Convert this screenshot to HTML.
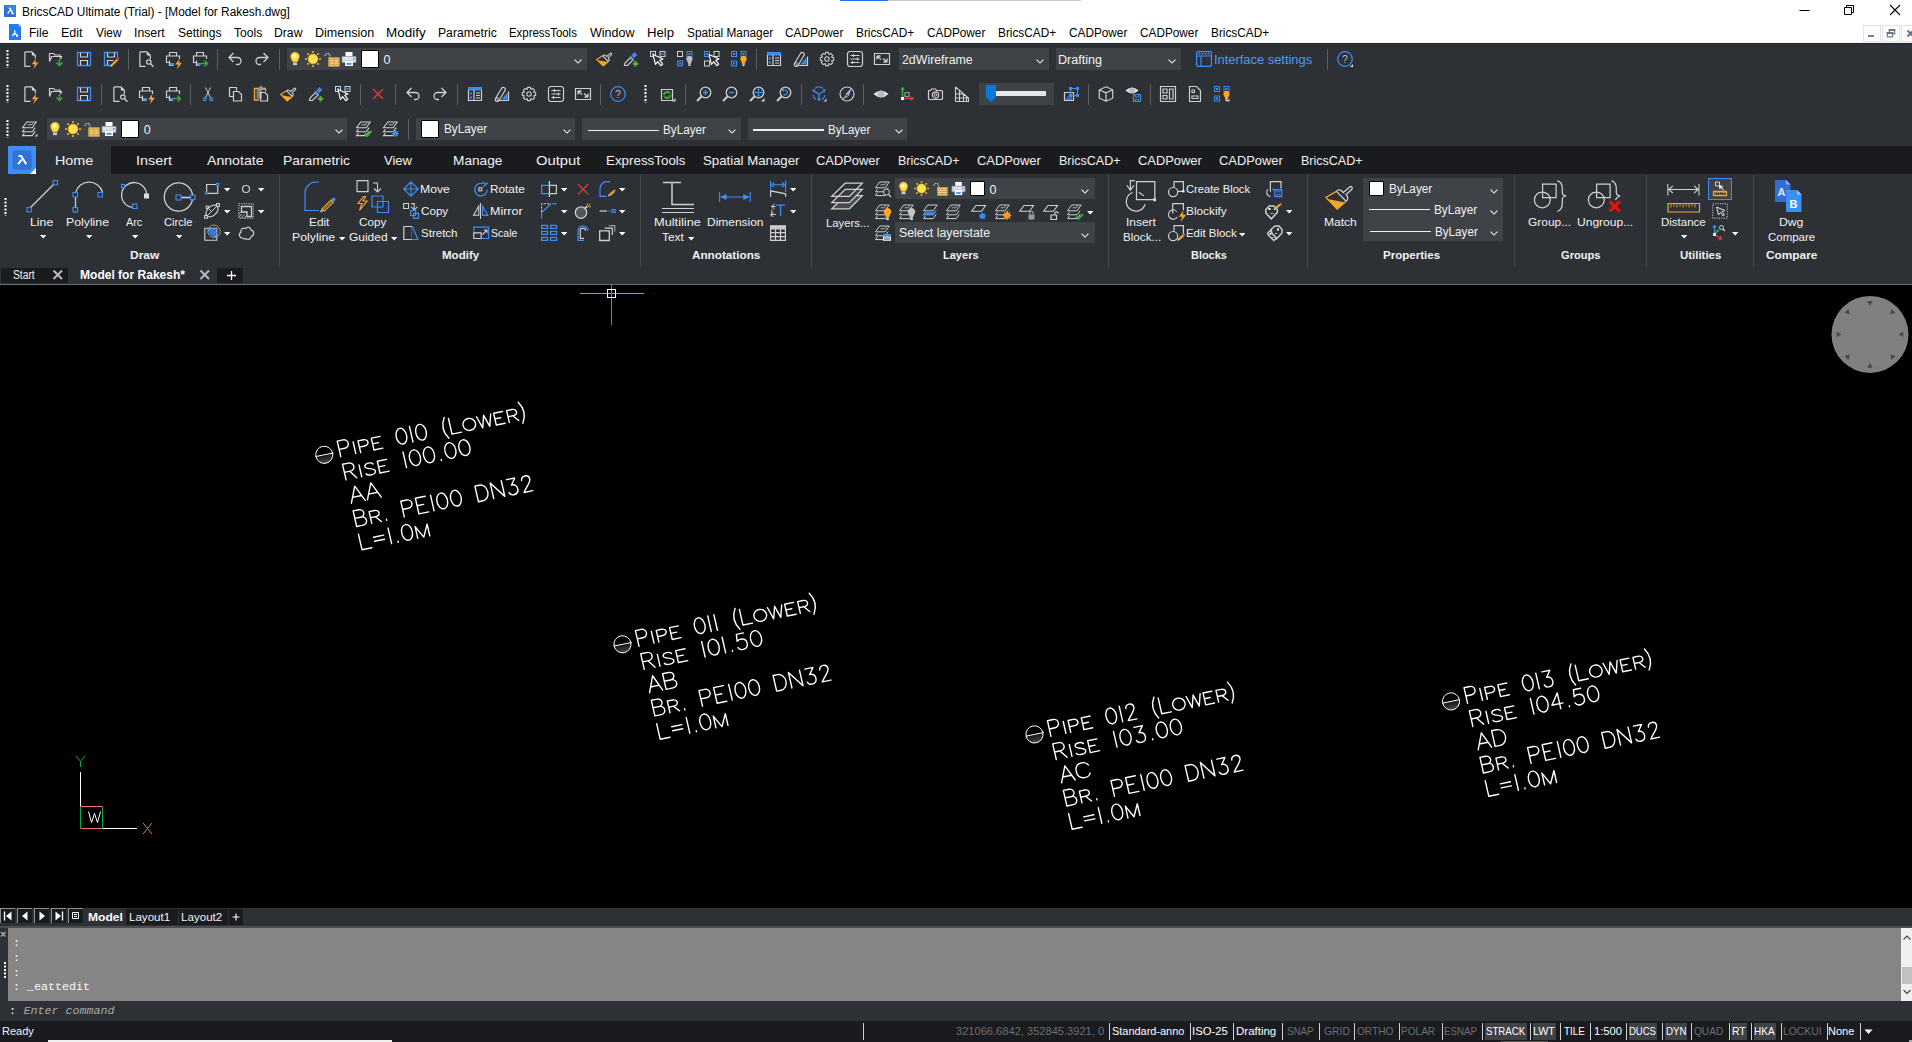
<!DOCTYPE html>
<html><head><meta charset="utf-8"><title>BricsCAD</title>
<style>
html,body{margin:0;padding:0;width:1912px;height:1042px;overflow:hidden;background:#2d3035}
body{position:relative;font-family:"Liberation Sans",sans-serif;font-size:12px}
div,span,svg{position:absolute;display:block}
span{white-space:pre}
svg{overflow:visible}
.cad path,.cad circle{vector-effect:non-scaling-stroke}
</style></head><body>
<div style="left:0px;top:0px;width:1912px;height:43px;background:#fff;"></div>
<div style="left:0px;top:42px;width:1912px;height:1px;background:#f2f2f2;"></div>
<div style="left:840px;top:0px;width:48px;height:1px;background:#1a73e8;"></div>
<div style="left:888px;top:0px;width:193px;height:1px;background:#c8c8c8;"></div>
<div style="left:0px;top:43px;width:1912px;height:103px;background:#2d3035;"></div>
<div style="left:0px;top:43px;width:1912px;height:1px;background:#26282c;"></div>
<div style="left:0px;top:146px;width:1912px;height:28px;background:#2d3035;"></div>
<div style="left:111px;top:146px;width:1801px;height:28px;background:#1a1b1e;"></div>
<div style="left:0px;top:174px;width:1912px;height:93px;background:#2d3035;"></div>
<div style="left:0px;top:267px;width:1912px;height:17px;background:#2d3035;"></div>
<div style="left:1px;top:268px;width:67px;height:15px;background:#1a1b1e;"></div>
<div style="left:217px;top:268px;width:26px;height:15px;background:#1a1b1e;"></div>
<div style="left:0px;top:284px;width:1912px;height:1px;background:#6a6c70;"></div>
<div style="left:0px;top:285px;width:1912px;height:623px;background:#000;"></div>
<div style="left:0px;top:908px;width:1912px;height:18px;background:#2d3035;"></div>
<div style="left:0px;top:926px;width:1912px;height:2px;background:#4a4d52;"></div>
<div style="left:0px;top:928px;width:1912px;height:73px;background:#2d3035;"></div>
<div style="left:8px;top:928px;width:1893px;height:73px;background:#858585;"></div>
<div style="left:1901px;top:928px;width:11px;height:73px;background:#f0f0f0;"></div>
<div style="left:0px;top:1001px;width:1912px;height:20px;background:#2d3035;"></div>
<div style="left:0px;top:1021px;width:1912px;height:21px;background:#1a1b1e;"></div>
<svg style="left:4px;top:5px" width="12" height="12" viewBox="0 0 12 12"><rect width="12" height="12" rx=".6" fill="#2f6dd4"/><path d="M.5 .5h11v11z" fill="#3f86ea"/><path d="M4.800 3.400h1.300l2.800 5.200h-1.600M6.300 5.200L3.600 8.700" stroke="#fff" stroke-width="1.300" fill="none"/></svg>
<span style="left:22.45px;top:3.9px;height:16px;line-height:16px;font-size:12px;color:#000;transform:scaleX(0.9910);transform-origin:0 0;">BricsCAD Ultimate (Trial) - [Model for Rakesh.dwg]</span>
<svg style="left:1790px;top:0" width="122" height="22" viewBox="0 0 122 22"><path d="M9.5 10.5h10" stroke="#000" stroke-width="1" fill="none"/><path d="M54.500 7.500h7v7h-7zM56.500 7.500v-2h7v7h-2" stroke="#000" stroke-width="1" fill="none"/><path d="M100 5l10 10M110 5l-10 10" stroke="#000" stroke-width="1.1" fill="none"/></svg>
<svg style="left:9px;top:24px" width="12" height="16" viewBox="0 0 12 16"><path d="M0 0h9.500L12 2.500V16H0z" fill="#2179f6"/><path d="M9.500 0v2.500H12z" fill="#7ab0fa"/><path d="M5.700 6.200v3L3.300 12.200M5.700 9.200l2.900 2.400l-1.400 1" stroke="#fff" stroke-width="1.300" fill="none" stroke-linejoin="round"/></svg>
<span style="left:29.44px;top:24.9px;height:16px;line-height:16px;font-size:12px;color:#000;transform:scaleX(1.0028);transform-origin:0 0;">File</span>
<span style="left:61.00px;top:24.9px;height:16px;line-height:16px;font-size:12px;color:#000;transform:scaleX(1.0428);transform-origin:0 0;">Edit</span>
<span style="left:96.00px;top:24.9px;height:16px;line-height:16px;font-size:12px;color:#000;transform:scaleX(0.9888);transform-origin:0 0;">View</span>
<span style="left:133.90px;top:24.9px;height:16px;line-height:16px;font-size:12px;color:#000;transform:scaleX(1.0220);transform-origin:0 0;">Insert</span>
<span style="left:177.52px;top:24.9px;height:16px;line-height:16px;font-size:12px;color:#000;transform:scaleX(1.0019);transform-origin:0 0;">Settings</span>
<span style="left:233.76px;top:24.9px;height:16px;line-height:16px;font-size:12px;color:#000;transform:scaleX(1.0067);transform-origin:0 0;">Tools</span>
<span style="left:274.02px;top:24.9px;height:16px;line-height:16px;font-size:12px;color:#000;transform:scaleX(1.0166);transform-origin:0 0;">Draw</span>
<span style="left:315.00px;top:24.9px;height:16px;line-height:16px;font-size:12px;color:#000;transform:scaleX(1.0459);transform-origin:0 0;">Dimension</span>
<span style="left:385.92px;top:24.9px;height:16px;line-height:16px;font-size:12px;color:#000;transform:scaleX(1.1226);transform-origin:0 0;">Modify</span>
<span style="left:438.03px;top:24.9px;height:16px;line-height:16px;font-size:12px;color:#000;transform:scaleX(1.0138);transform-origin:0 0;">Parametric</span>
<span style="left:509.09px;top:24.9px;height:16px;line-height:16px;font-size:12px;color:#000;transform:scaleX(0.9507);transform-origin:0 0;">ExpressTools</span>
<span style="left:590.00px;top:24.9px;height:16px;line-height:16px;font-size:12px;color:#000;transform:scaleX(1.0425);transform-origin:0 0;">Window</span>
<span style="left:646.94px;top:24.9px;height:16px;line-height:16px;font-size:12px;color:#000;transform:scaleX(1.0990);transform-origin:0 0;">Help</span>
<span style="left:686.53px;top:24.9px;height:16px;line-height:16px;font-size:12px;color:#000;transform:scaleX(0.9867);transform-origin:0 0;">Spatial Manager</span>
<span style="left:785.41px;top:24.9px;height:16px;line-height:16px;font-size:12px;color:#000;transform:scaleX(0.9829);transform-origin:0 0;">CADPower</span>
<span style="left:856.06px;top:24.9px;height:16px;line-height:16px;font-size:12px;color:#000;transform:scaleX(0.9839);transform-origin:0 0;">BricsCAD+</span>
<span style="left:927.41px;top:24.9px;height:16px;line-height:16px;font-size:12px;color:#000;transform:scaleX(0.9829);transform-origin:0 0;">CADPower</span>
<span style="left:998.06px;top:24.9px;height:16px;line-height:16px;font-size:12px;color:#000;transform:scaleX(0.9839);transform-origin:0 0;">BricsCAD+</span>
<span style="left:1069.41px;top:24.9px;height:16px;line-height:16px;font-size:12px;color:#000;transform:scaleX(0.9829);transform-origin:0 0;">CADPower</span>
<span style="left:1140.41px;top:24.9px;height:16px;line-height:16px;font-size:12px;color:#000;transform:scaleX(0.9829);transform-origin:0 0;">CADPower</span>
<span style="left:1211.06px;top:24.9px;height:16px;line-height:16px;font-size:12px;color:#000;transform:scaleX(0.9839);transform-origin:0 0;">BricsCAD+</span>
<div style="left:1863.3px;top:24.5px;width:17.4px;height:17.4px;background:#fdfdfd;border:1px solid #e2e2e2;box-sizing:border-box;"></div>
<div style="left:1882.4px;top:24.5px;width:17.3px;height:17.4px;background:#fdfdfd;border:1px solid #e2e2e2;box-sizing:border-box;"></div>
<div style="left:1901.2px;top:24.5px;width:17px;height:17.4px;background:#fdfdfd;border:1px solid #e2e2e2;box-sizing:border-box;"></div>
<svg style="left:1863px;top:24px" width="49" height="17" viewBox="0 0 49 17"><rect x="5" y="11.100" width="6" height="1.800" fill="#62748a"/><rect x="26.300" y="5.600" width="5.400" height="4.200" fill="none" stroke="#62748a" stroke-width="1.100"/><rect x="25.750" y="5" width="6.500" height="1.900" fill="#62748a"/><rect x="24.300" y="8.700" width="5.400" height="4.200" fill="#fdfdfd" stroke="#62748a" stroke-width="1.100"/><rect x="23.750" y="8.100" width="6.500" height="1.900" fill="#62748a"/><path d="M44.500 6.500l6 6M50.500 6.500l-6 6" stroke="#62748a" stroke-width="2"/></svg>
<div style="left:8px;top:146px;width:28px;height:28px;background:#3d8ef5;"></div>
<svg style="left:8px;top:146px" width="28" height="28" viewBox="0 0 28 28"><rect x="4.5" y="4.5" width="19" height="19" rx="2" fill="#3273d8"/><path d="M23.5 23.5v-14l-14 14z" fill="#2f6bc8" opacity=".5"/><path d="M10.5 10h2.6l5.2 8.2M13.8 13.6L10 18.2" stroke="#fff" stroke-width="2" fill="none"/><path d="M28 22v6h-6z" fill="#fff"/></svg>
<span style="left:55.25px;top:151.4px;height:20px;line-height:20px;font-size:13.5px;color:#f2f2f2;transform:scaleX(1.0625);transform-origin:0 0;">Home</span>
<span style="left:136.01px;top:151.4px;height:20px;line-height:20px;font-size:13.5px;color:#f2f2f2;transform:scaleX(1.0651);transform-origin:0 0;">Insert</span>
<span style="left:207.00px;top:151.4px;height:20px;line-height:20px;font-size:13.5px;color:#f2f2f2;transform:scaleX(1.0456);transform-origin:0 0;">Annotate</span>
<span style="left:282.89px;top:151.4px;height:20px;line-height:20px;font-size:13.5px;color:#f2f2f2;transform:scaleX(1.0248);transform-origin:0 0;">Parametric</span>
<span style="left:383.90px;top:151.4px;height:20px;line-height:20px;font-size:13.5px;color:#f2f2f2;transform:scaleX(0.9644);transform-origin:0 0;">View</span>
<span style="left:452.91px;top:151.4px;height:20px;line-height:20px;font-size:13.5px;color:#f2f2f2;transform:scaleX(1.0121);transform-origin:0 0;">Manage</span>
<span style="left:535.61px;top:151.4px;height:20px;line-height:20px;font-size:13.5px;color:#f2f2f2;transform:scaleX(1.0944);transform-origin:0 0;">Output</span>
<span style="left:605.93px;top:151.4px;height:20px;line-height:20px;font-size:13.5px;color:#f2f2f2;transform:scaleX(0.9897);transform-origin:0 0;">ExpressTools</span>
<span style="left:702.77px;top:151.4px;height:20px;line-height:20px;font-size:13.5px;color:#f2f2f2;transform:scaleX(0.9806);transform-origin:0 0;">Spatial Manager</span>
<span style="left:816.36px;top:151.4px;height:20px;line-height:20px;font-size:13.5px;color:#f2f2f2;transform:scaleX(0.9555);transform-origin:0 0;">CADPower</span>
<span style="left:898.00px;top:151.4px;height:20px;line-height:20px;font-size:13.5px;color:#f2f2f2;transform:scaleX(0.9271);transform-origin:0 0;">BricsCAD+</span>
<span style="left:977.36px;top:151.4px;height:20px;line-height:20px;font-size:13.5px;color:#f2f2f2;transform:scaleX(0.9555);transform-origin:0 0;">CADPower</span>
<span style="left:1059.00px;top:151.4px;height:20px;line-height:20px;font-size:13.5px;color:#f2f2f2;transform:scaleX(0.9271);transform-origin:0 0;">BricsCAD+</span>
<span style="left:1138.36px;top:151.4px;height:20px;line-height:20px;font-size:13.5px;color:#f2f2f2;transform:scaleX(0.9555);transform-origin:0 0;">CADPower</span>
<span style="left:1219.36px;top:151.4px;height:20px;line-height:20px;font-size:13.5px;color:#f2f2f2;transform:scaleX(0.9555);transform-origin:0 0;">CADPower</span>
<span style="left:1301.00px;top:151.4px;height:20px;line-height:20px;font-size:13.5px;color:#f2f2f2;transform:scaleX(0.9271);transform-origin:0 0;">BricsCAD+</span>
<span style="left:12.79px;top:266.7px;height:16px;line-height:16px;font-size:12px;color:#f2f2f2;transform:scaleX(0.8558);transform-origin:0 0;">Start</span>
<span style="left:79.78px;top:267px;height:16px;line-height:16px;font-size:12px;color:#fff;font-weight:bold;transform:scaleX(1.0030);transform-origin:0 0;">Model for Rakesh*</span>
<svg style="left:52px;top:269px" width="12" height="12" viewBox="0 0 12 12"><path d="M1.5 1.5l8.5 8.5M10 1.5l-8.5 8.5" stroke="#b8bcc6" stroke-width="1.9"/></svg>
<svg style="left:199px;top:269px" width="12" height="12" viewBox="0 0 12 12"><path d="M1.5 1.5l8.5 8.5M10 1.5l-8.5 8.5" stroke="#b8bcc6" stroke-width="1.9"/></svg>
<svg style="left:226px;top:270px" width="11" height="11" viewBox="0 0 11 11"><path d="M5.5 1v9M1 5.5h9" stroke="#fff" stroke-width="1.3"/></svg>
<svg style="left:0;top:285px" width="1912" height="623" viewBox="0 285 1912 623" fill="none" stroke="#fff" stroke-width="1.4" stroke-linecap="round" stroke-linejoin="round"><defs><linearGradient id="cg" x1="0" y1="0" x2="0" y2="1"><stop offset="0" stop-color="#111"/><stop offset="1" stop-color="#4a4a4a"/></linearGradient></defs><g class="cad"><g transform="translate(340.8 456.7) rotate(-11.50) skewX(1.4)"><path transform="translate(0.00 0) scale(16.385 16.000)" d="M0 0V-1H.36A.26 .26 0 0 1 .36 -.47H0"/><path transform="translate(15.32 0) scale(15.074 12.080)" d="M0 0V-1"/><path transform="translate(20.29 0) scale(15.074 12.080)" d="M0 0V-1H.36A.26 .26 0 0 1 .36 -.47H0"/><path transform="translate(33.86 0) scale(15.074 12.080)" d="M.6 0H0V-1H.6M0 -.52H.4"/><path transform="translate(58.45 0) scale(16.385 16.000)" d="M.32 -1A.32 .5 0 1 0 .32 0A.32 .5 0 1 0 .32 -1"/><path transform="translate(73.68 0) scale(16.385 16.000)" d="M0 0V-1"/><path transform="translate(78.44 0) scale(16.385 16.000)" d="M.32 -1A.32 .5 0 1 0 .32 0A.32 .5 0 1 0 .32 -1"/><path transform="translate(105.63 0) scale(16.385 16.000)" d="M.24 -1.12Q-.18 -.45 .24 .22"/><path transform="translate(113.50 0) scale(16.385 16.000)" d="M0 -1V0H.6"/><path transform="translate(126.15 0) scale(15.074 12.080)" d="M.42 -1A.42 .5 0 1 0 .42 0A.42 .5 0 1 0 .42 -1"/><path transform="translate(141.22 0) scale(15.074 12.080)" d="M0 -1L.24 0L.48 -1L.72 0L.96 -1"/><path transform="translate(158.71 0) scale(15.074 12.080)" d="M.6 0H0V-1H.6M0 -.52H.4"/><path transform="translate(171.97 0) scale(15.074 12.080)" d="M0 0V-1H.36A.26 .26 0 0 1 .36 -.48H0M.32 -.48L.64 0"/><path transform="translate(185.07 0) scale(16.385 16.000)" d="M0 -1.12Q.42 -.45 0 .22"/></g><g transform="translate(346.1 479.9) rotate(-11.50) skewX(1.4)"><path transform="translate(0.00 0) scale(17.043 16.000)" d="M0 0V-1H.36A.26 .26 0 0 1 .36 -.48H0M.32 -.48L.64 0"/><path transform="translate(15.93 0) scale(15.680 12.080)" d="M0 0V-1"/><path transform="translate(20.79 0) scale(15.680 12.080)" d="M.58 -.84C.5 -1.05 .06 -1.06 .03 -.78C0 -.5 .62 -.55 .62 -.24C.62 .08 .08 .06 0 -.17"/><path transform="translate(34.59 0) scale(15.680 12.080)" d="M.6 0H0V-1H.6M0 -.52H.4"/><path transform="translate(61.70 0) scale(17.043 16.000)" d="M0 0V-1"/><path transform="translate(66.65 0) scale(17.043 16.000)" d="M.32 -1A.32 .5 0 1 0 .32 0A.32 .5 0 1 0 .32 -1"/><path transform="translate(80.96 0) scale(17.043 16.000)" d="M.32 -1A.32 .5 0 1 0 .32 0A.32 .5 0 1 0 .32 -1"/><path transform="translate(97.32 0) scale(17.043 16.000)" d="M0 -.07V0"/><path transform="translate(102.78 0) scale(17.043 16.000)" d="M.32 -1A.32 .5 0 1 0 .32 0A.32 .5 0 1 0 .32 -1"/><path transform="translate(117.09 0) scale(17.043 16.000)" d="M.32 -1A.32 .5 0 1 0 .32 0A.32 .5 0 1 0 .32 -1"/></g><g transform="translate(351.4 503.2) rotate(-11.50) skewX(1.4)"><path transform="translate(0.00 0) scale(18.598 16.000)" d="M0 0L.38 -1L.76 0M.13 -.34H.63"/><path transform="translate(16.37 0) scale(18.598 16.000)" d="M0 0L.38 -1L.76 0M.13 -.34H.63"/></g><g transform="translate(356.7 526.5) rotate(-11.50) skewX(1.4)"><path transform="translate(0.00 0) scale(16.596 16.000)" d="M0 0V-1H.36A.24 .24 0 0 1 .36 -.52H0M.36 -.52H.4A.26 .26 0 0 1 .4 0H0"/><path transform="translate(15.41 0) scale(15.268 12.080)" d="M0 0V-1H.36A.26 .26 0 0 1 .36 -.48H0M.32 -.48L.64 0"/><path transform="translate(30.67 0) scale(16.596 16.000)" d="M0 -.07V0"/><path transform="translate(48.59 0) scale(16.596 16.000)" d="M0 0V-1H.36A.26 .26 0 0 1 .36 -.47H0"/><path transform="translate(63.53 0) scale(16.596 16.000)" d="M.6 0H0V-1H.6M0 -.52H.4"/><path transform="translate(78.96 0) scale(16.596 16.000)" d="M0 0V-1"/><path transform="translate(83.78 0) scale(16.596 16.000)" d="M.32 -1A.32 .5 0 1 0 .32 0A.32 .5 0 1 0 .32 -1"/><path transform="translate(97.72 0) scale(16.596 16.000)" d="M.32 -1A.32 .5 0 1 0 .32 0A.32 .5 0 1 0 .32 -1"/><path transform="translate(124.27 0) scale(16.596 16.000)" d="M0 0V-1H.28A.4 .5 0 0 1 .28 0H0"/><path transform="translate(139.87 0) scale(16.596 16.000)" d="M0 0V-1L.68 0V-1"/><path transform="translate(156.13 0) scale(16.596 16.000)" d="M.03 -1H.53L.24 -.6C.45 -.64 .56 -.48 .56 -.3C.56 .08 .08 .1 0 -.17"/><path transform="translate(170.74 0) scale(16.596 16.000)" d="M.02 -.76C.02 -1.08 .52 -1.08 .52 -.76C.52 -.55 .3 -.4 0 0H.54"/></g><g transform="translate(362.0 549.7) rotate(-11.50) skewX(1.4)"><path transform="translate(0.00 0) scale(16.696 16.000)" d="M0 -1V0H.6"/><path transform="translate(14.02 0) scale(16.696 16.000)" d="M0 -.62H.62M0 -.36H.62"/><path transform="translate(30.22 0) scale(16.696 16.000)" d="M0 0V-1"/><path transform="translate(37.06 0) scale(16.696 16.000)" d="M0 -.07V0"/><path transform="translate(42.41 0) scale(16.696 16.000)" d="M.32 -1A.32 .5 0 1 0 .32 0A.32 .5 0 1 0 .32 -1"/><path transform="translate(56.91 0) scale(15.360 12.080)" d="M0 0V-1L.4 0L.8 -1V0"/></g><g transform="translate(324.3 454.8) rotate(-11.5)"><path d="M-8.6 0A8.6 8.6 0 0 0 8.6 0z" fill="url(#cg)" stroke="none"/><circle r="8.6" stroke-width="1"/><path d="M-8.6 0H8.6" stroke-width="1"/></g><g transform="translate(639.0 646.2) rotate(-11.50) skewX(1.4)"><path transform="translate(0.00 0) scale(16.406 16.000)" d="M0 0V-1H.36A.26 .26 0 0 1 .36 -.47H0"/><path transform="translate(15.34 0) scale(15.094 12.080)" d="M0 0V-1"/><path transform="translate(20.32 0) scale(15.094 12.080)" d="M0 0V-1H.36A.26 .26 0 0 1 .36 -.47H0"/><path transform="translate(33.90 0) scale(15.094 12.080)" d="M.6 0H0V-1H.6M0 -.52H.4"/><path transform="translate(58.52 0) scale(16.406 16.000)" d="M.32 -1A.32 .5 0 1 0 .32 0A.32 .5 0 1 0 .32 -1"/><path transform="translate(73.78 0) scale(16.406 16.000)" d="M0 0V-1"/><path transform="translate(80.02 0) scale(16.406 16.000)" d="M0 0V-1"/><path transform="translate(98.23 0) scale(16.406 16.000)" d="M.24 -1.12Q-.18 -.45 .24 .22"/><path transform="translate(106.10 0) scale(16.406 16.000)" d="M0 -1V0H.6"/><path transform="translate(118.77 0) scale(15.094 12.080)" d="M.42 -1A.42 .5 0 1 0 .42 0A.42 .5 0 1 0 .42 -1"/><path transform="translate(133.86 0) scale(15.094 12.080)" d="M0 -1L.24 0L.48 -1L.72 0L.96 -1"/><path transform="translate(151.37 0) scale(15.094 12.080)" d="M.6 0H0V-1H.6M0 -.52H.4"/><path transform="translate(164.65 0) scale(15.094 12.080)" d="M0 0V-1H.36A.26 .26 0 0 1 .36 -.48H0M.32 -.48L.64 0"/><path transform="translate(177.76 0) scale(16.406 16.000)" d="M0 -1.12Q.42 -.45 0 .22"/></g><g transform="translate(644.3 669.4) rotate(-11.50) skewX(1.4)"><path transform="translate(0.00 0) scale(17.156 16.000)" d="M0 0V-1H.36A.26 .26 0 0 1 .36 -.48H0M.32 -.48L.64 0"/><path transform="translate(16.04 0) scale(15.784 12.080)" d="M0 0V-1"/><path transform="translate(20.93 0) scale(15.784 12.080)" d="M.58 -.84C.5 -1.05 .06 -1.06 .03 -.78C0 -.5 .62 -.55 .62 -.24C.62 .08 .08 .06 0 -.17"/><path transform="translate(34.82 0) scale(15.784 12.080)" d="M.6 0H0V-1H.6M0 -.52H.4"/><path transform="translate(62.11 0) scale(17.156 16.000)" d="M0 0V-1"/><path transform="translate(67.09 0) scale(17.156 16.000)" d="M.32 -1A.32 .5 0 1 0 .32 0A.32 .5 0 1 0 .32 -1"/><path transform="translate(83.04 0) scale(17.156 16.000)" d="M0 0V-1"/><path transform="translate(90.08 0) scale(17.156 16.000)" d="M0 -.07V0"/><path transform="translate(96.25 0) scale(17.156 16.000)" d="M.5 -1H.08L.03 -.56C.18 -.72 .58 -.7 .58 -.33C.58 .07 .1 .1 0 -.17"/><path transform="translate(110.32 0) scale(17.156 16.000)" d="M.32 -1A.32 .5 0 1 0 .32 0A.32 .5 0 1 0 .32 -1"/></g><g transform="translate(649.6 692.7) rotate(-11.50) skewX(1.4)"><path transform="translate(0.00 0) scale(17.593 16.000)" d="M0 0L.38 -1L.76 0M.13 -.34H.63"/><path transform="translate(16.89 0) scale(17.593 16.000)" d="M0 0V-1H.36A.24 .24 0 0 1 .36 -.52H0M.36 -.52H.4A.26 .26 0 0 1 .4 0H0"/></g><g transform="translate(654.9 715.9) rotate(-11.50) skewX(1.4)"><path transform="translate(0.00 0) scale(16.596 16.000)" d="M0 0V-1H.36A.24 .24 0 0 1 .36 -.52H0M.36 -.52H.4A.26 .26 0 0 1 .4 0H0"/><path transform="translate(15.41 0) scale(15.268 12.080)" d="M0 0V-1H.36A.26 .26 0 0 1 .36 -.48H0M.32 -.48L.64 0"/><path transform="translate(30.67 0) scale(16.596 16.000)" d="M0 -.07V0"/><path transform="translate(48.59 0) scale(16.596 16.000)" d="M0 0V-1H.36A.26 .26 0 0 1 .36 -.47H0"/><path transform="translate(63.53 0) scale(16.596 16.000)" d="M.6 0H0V-1H.6M0 -.52H.4"/><path transform="translate(78.96 0) scale(16.596 16.000)" d="M0 0V-1"/><path transform="translate(83.78 0) scale(16.596 16.000)" d="M.32 -1A.32 .5 0 1 0 .32 0A.32 .5 0 1 0 .32 -1"/><path transform="translate(97.72 0) scale(16.596 16.000)" d="M.32 -1A.32 .5 0 1 0 .32 0A.32 .5 0 1 0 .32 -1"/><path transform="translate(124.27 0) scale(16.596 16.000)" d="M0 0V-1H.28A.4 .5 0 0 1 .28 0H0"/><path transform="translate(139.87 0) scale(16.596 16.000)" d="M0 0V-1L.68 0V-1"/><path transform="translate(156.13 0) scale(16.596 16.000)" d="M.03 -1H.53L.24 -.6C.45 -.64 .56 -.48 .56 -.3C.56 .08 .08 .1 0 -.17"/><path transform="translate(170.74 0) scale(16.596 16.000)" d="M.02 -.76C.02 -1.08 .52 -1.08 .52 -.76C.52 -.55 .3 -.4 0 0H.54"/></g><g transform="translate(660.2 739.2) rotate(-11.50) skewX(1.4)"><path transform="translate(0.00 0) scale(16.696 16.000)" d="M0 -1V0H.6"/><path transform="translate(14.02 0) scale(16.696 16.000)" d="M0 -.62H.62M0 -.36H.62"/><path transform="translate(30.22 0) scale(16.696 16.000)" d="M0 0V-1"/><path transform="translate(37.06 0) scale(16.696 16.000)" d="M0 -.07V0"/><path transform="translate(42.41 0) scale(16.696 16.000)" d="M.32 -1A.32 .5 0 1 0 .32 0A.32 .5 0 1 0 .32 -1"/><path transform="translate(56.91 0) scale(15.360 12.080)" d="M0 0V-1L.4 0L.8 -1V0"/></g><g transform="translate(622.5 644.3) rotate(-11.5)"><path d="M-8.6 0A8.6 8.6 0 0 0 8.6 0z" fill="url(#cg)" stroke="none"/><circle r="8.6" stroke-width="1"/><path d="M-8.6 0H8.6" stroke-width="1"/></g><g transform="translate(1051.0 736.3) rotate(-11.50) skewX(1.4)"><path transform="translate(0.00 0) scale(16.270 16.000)" d="M0 0V-1H.36A.26 .26 0 0 1 .36 -.47H0"/><path transform="translate(15.21 0) scale(14.968 12.080)" d="M0 0V-1"/><path transform="translate(20.15 0) scale(14.968 12.080)" d="M0 0V-1H.36A.26 .26 0 0 1 .36 -.47H0"/><path transform="translate(33.62 0) scale(14.968 12.080)" d="M.6 0H0V-1H.6M0 -.52H.4"/><path transform="translate(58.04 0) scale(16.270 16.000)" d="M.32 -1A.32 .5 0 1 0 .32 0A.32 .5 0 1 0 .32 -1"/><path transform="translate(73.17 0) scale(16.270 16.000)" d="M0 0V-1"/><path transform="translate(78.86 0) scale(16.270 16.000)" d="M.02 -.76C.02 -1.08 .52 -1.08 .52 -.76C.52 -.55 .3 -.4 0 0H.54"/><path transform="translate(105.22 0) scale(16.270 16.000)" d="M.24 -1.12Q-.18 -.45 .24 .22"/><path transform="translate(113.03 0) scale(16.270 16.000)" d="M0 -1V0H.6"/><path transform="translate(125.59 0) scale(14.968 12.080)" d="M.42 -1A.42 .5 0 1 0 .42 0A.42 .5 0 1 0 .42 -1"/><path transform="translate(140.56 0) scale(14.968 12.080)" d="M0 -1L.24 0L.48 -1L.72 0L.96 -1"/><path transform="translate(157.92 0) scale(14.968 12.080)" d="M.6 0H0V-1H.6M0 -.52H.4"/><path transform="translate(171.09 0) scale(14.968 12.080)" d="M0 0V-1H.36A.26 .26 0 0 1 .36 -.48H0M.32 -.48L.64 0"/><path transform="translate(184.10 0) scale(16.270 16.000)" d="M0 -1.12Q.42 -.45 0 .22"/></g><g transform="translate(1056.3 759.5) rotate(-11.50) skewX(1.4)"><path transform="translate(0.00 0) scale(17.125 16.000)" d="M0 0V-1H.36A.26 .26 0 0 1 .36 -.48H0M.32 -.48L.64 0"/><path transform="translate(16.01 0) scale(15.755 12.080)" d="M0 0V-1"/><path transform="translate(20.89 0) scale(15.755 12.080)" d="M.58 -.84C.5 -1.05 .06 -1.06 .03 -.78C0 -.5 .62 -.55 .62 -.24C.62 .08 .08 .06 0 -.17"/><path transform="translate(34.76 0) scale(15.755 12.080)" d="M.6 0H0V-1H.6M0 -.52H.4"/><path transform="translate(62.00 0) scale(17.125 16.000)" d="M0 0V-1"/><path transform="translate(66.97 0) scale(17.125 16.000)" d="M.32 -1A.32 .5 0 1 0 .32 0A.32 .5 0 1 0 .32 -1"/><path transform="translate(82.38 0) scale(17.125 16.000)" d="M.03 -1H.53L.24 -.6C.45 -.64 .56 -.48 .56 -.3C.56 .08 .08 .1 0 -.17"/><path transform="translate(98.48 0) scale(17.125 16.000)" d="M0 -.07V0"/><path transform="translate(103.96 0) scale(17.125 16.000)" d="M.32 -1A.32 .5 0 1 0 .32 0A.32 .5 0 1 0 .32 -1"/><path transform="translate(118.34 0) scale(17.125 16.000)" d="M.32 -1A.32 .5 0 1 0 .32 0A.32 .5 0 1 0 .32 -1"/></g><g transform="translate(1061.6 782.8) rotate(-11.50) skewX(1.4)"><path transform="translate(0.00 0) scale(18.293 16.000)" d="M0 0L.38 -1L.76 0M.13 -.34H.63"/><path transform="translate(16.83 0) scale(18.293 16.000)" d="M.72 -.76C.6 -1.08 0 -1.08 0 -.5C0 .08 .6 .08 .72 -.24"/></g><g transform="translate(1066.9 806.0) rotate(-11.50) skewX(1.4)"><path transform="translate(0.00 0) scale(16.596 16.000)" d="M0 0V-1H.36A.24 .24 0 0 1 .36 -.52H0M.36 -.52H.4A.26 .26 0 0 1 .4 0H0"/><path transform="translate(15.41 0) scale(15.268 12.080)" d="M0 0V-1H.36A.26 .26 0 0 1 .36 -.48H0M.32 -.48L.64 0"/><path transform="translate(30.67 0) scale(16.596 16.000)" d="M0 -.07V0"/><path transform="translate(48.59 0) scale(16.596 16.000)" d="M0 0V-1H.36A.26 .26 0 0 1 .36 -.47H0"/><path transform="translate(63.53 0) scale(16.596 16.000)" d="M.6 0H0V-1H.6M0 -.52H.4"/><path transform="translate(78.96 0) scale(16.596 16.000)" d="M0 0V-1"/><path transform="translate(83.78 0) scale(16.596 16.000)" d="M.32 -1A.32 .5 0 1 0 .32 0A.32 .5 0 1 0 .32 -1"/><path transform="translate(97.72 0) scale(16.596 16.000)" d="M.32 -1A.32 .5 0 1 0 .32 0A.32 .5 0 1 0 .32 -1"/><path transform="translate(124.27 0) scale(16.596 16.000)" d="M0 0V-1H.28A.4 .5 0 0 1 .28 0H0"/><path transform="translate(139.87 0) scale(16.596 16.000)" d="M0 0V-1L.68 0V-1"/><path transform="translate(156.13 0) scale(16.596 16.000)" d="M.03 -1H.53L.24 -.6C.45 -.64 .56 -.48 .56 -.3C.56 .08 .08 .1 0 -.17"/><path transform="translate(170.74 0) scale(16.596 16.000)" d="M.02 -.76C.02 -1.08 .52 -1.08 .52 -.76C.52 -.55 .3 -.4 0 0H.54"/></g><g transform="translate(1072.2 829.3) rotate(-11.50) skewX(1.4)"><path transform="translate(0.00 0) scale(16.696 16.000)" d="M0 -1V0H.6"/><path transform="translate(14.02 0) scale(16.696 16.000)" d="M0 -.62H.62M0 -.36H.62"/><path transform="translate(30.22 0) scale(16.696 16.000)" d="M0 0V-1"/><path transform="translate(37.06 0) scale(16.696 16.000)" d="M0 -.07V0"/><path transform="translate(42.41 0) scale(16.696 16.000)" d="M.32 -1A.32 .5 0 1 0 .32 0A.32 .5 0 1 0 .32 -1"/><path transform="translate(56.91 0) scale(15.360 12.080)" d="M0 0V-1L.4 0L.8 -1V0"/></g><g transform="translate(1034.5 734.4) rotate(-11.5)"><path d="M-8.6 0A8.6 8.6 0 0 0 8.6 0z" fill="url(#cg)" stroke="none"/><circle r="8.6" stroke-width="1"/><path d="M-8.6 0H8.6" stroke-width="1"/></g><g transform="translate(1467.6 703.3) rotate(-11.50) skewX(1.4)"><path transform="translate(0.00 0) scale(16.276 16.000)" d="M0 0V-1H.36A.26 .26 0 0 1 .36 -.47H0"/><path transform="translate(15.21 0) scale(14.974 12.080)" d="M0 0V-1"/><path transform="translate(20.16 0) scale(14.974 12.080)" d="M0 0V-1H.36A.26 .26 0 0 1 .36 -.47H0"/><path transform="translate(33.63 0) scale(14.974 12.080)" d="M.6 0H0V-1H.6M0 -.52H.4"/><path transform="translate(58.06 0) scale(16.276 16.000)" d="M.32 -1A.32 .5 0 1 0 .32 0A.32 .5 0 1 0 .32 -1"/><path transform="translate(73.20 0) scale(16.276 16.000)" d="M0 0V-1"/><path transform="translate(78.89 0) scale(16.276 16.000)" d="M.03 -1H.53L.24 -.6C.45 -.64 .56 -.48 .56 -.3C.56 .08 .08 .1 0 -.17"/><path transform="translate(105.59 0) scale(16.276 16.000)" d="M.24 -1.12Q-.18 -.45 .24 .22"/><path transform="translate(113.40 0) scale(16.276 16.000)" d="M0 -1V0H.6"/><path transform="translate(125.96 0) scale(14.974 12.080)" d="M.42 -1A.42 .5 0 1 0 .42 0A.42 .5 0 1 0 .42 -1"/><path transform="translate(140.94 0) scale(14.974 12.080)" d="M0 -1L.24 0L.48 -1L.72 0L.96 -1"/><path transform="translate(158.31 0) scale(14.974 12.080)" d="M.6 0H0V-1H.6M0 -.52H.4"/><path transform="translate(171.49 0) scale(14.974 12.080)" d="M0 0V-1H.36A.26 .26 0 0 1 .36 -.48H0M.32 -.48L.64 0"/><path transform="translate(184.49 0) scale(16.276 16.000)" d="M0 -1.12Q.42 -.45 0 .22"/></g><g transform="translate(1472.9 726.5) rotate(-11.50) skewX(1.4)"><path transform="translate(0.00 0) scale(17.218 16.000)" d="M0 0V-1H.36A.26 .26 0 0 1 .36 -.48H0M.32 -.48L.64 0"/><path transform="translate(16.10 0) scale(15.840 12.080)" d="M0 0V-1"/><path transform="translate(21.01 0) scale(15.840 12.080)" d="M.58 -.84C.5 -1.05 .06 -1.06 .03 -.78C0 -.5 .62 -.55 .62 -.24C.62 .08 .08 .06 0 -.17"/><path transform="translate(34.94 0) scale(15.840 12.080)" d="M.6 0H0V-1H.6M0 -.52H.4"/><path transform="translate(62.33 0) scale(17.218 16.000)" d="M0 0V-1"/><path transform="translate(67.33 0) scale(17.218 16.000)" d="M.32 -1A.32 .5 0 1 0 .32 0A.32 .5 0 1 0 .32 -1"/><path transform="translate(81.79 0) scale(17.218 16.000)" d="M.46 0V-1L0 -.32H.66"/><path transform="translate(98.66 0) scale(17.218 16.000)" d="M0 -.07V0"/><path transform="translate(104.86 0) scale(17.218 16.000)" d="M.5 -1H.08L.03 -.56C.18 -.72 .58 -.7 .58 -.33C.58 .07 .1 .1 0 -.17"/><path transform="translate(118.98 0) scale(17.218 16.000)" d="M.32 -1A.32 .5 0 1 0 .32 0A.32 .5 0 1 0 .32 -1"/></g><g transform="translate(1478.2 749.8) rotate(-11.50) skewX(1.4)"><path transform="translate(0.00 0) scale(18.049 16.000)" d="M0 0L.38 -1L.76 0M.13 -.34H.63"/><path transform="translate(17.33 0) scale(18.049 16.000)" d="M0 0V-1H.28A.4 .5 0 0 1 .28 0H0"/></g><g transform="translate(1483.5 773.0) rotate(-11.50) skewX(1.4)"><path transform="translate(0.00 0) scale(16.596 16.000)" d="M0 0V-1H.36A.24 .24 0 0 1 .36 -.52H0M.36 -.52H.4A.26 .26 0 0 1 .4 0H0"/><path transform="translate(15.41 0) scale(15.268 12.080)" d="M0 0V-1H.36A.26 .26 0 0 1 .36 -.48H0M.32 -.48L.64 0"/><path transform="translate(30.67 0) scale(16.596 16.000)" d="M0 -.07V0"/><path transform="translate(48.59 0) scale(16.596 16.000)" d="M0 0V-1H.36A.26 .26 0 0 1 .36 -.47H0"/><path transform="translate(63.53 0) scale(16.596 16.000)" d="M.6 0H0V-1H.6M0 -.52H.4"/><path transform="translate(78.96 0) scale(16.596 16.000)" d="M0 0V-1"/><path transform="translate(83.78 0) scale(16.596 16.000)" d="M.32 -1A.32 .5 0 1 0 .32 0A.32 .5 0 1 0 .32 -1"/><path transform="translate(97.72 0) scale(16.596 16.000)" d="M.32 -1A.32 .5 0 1 0 .32 0A.32 .5 0 1 0 .32 -1"/><path transform="translate(124.27 0) scale(16.596 16.000)" d="M0 0V-1H.28A.4 .5 0 0 1 .28 0H0"/><path transform="translate(139.87 0) scale(16.596 16.000)" d="M0 0V-1L.68 0V-1"/><path transform="translate(156.13 0) scale(16.596 16.000)" d="M.03 -1H.53L.24 -.6C.45 -.64 .56 -.48 .56 -.3C.56 .08 .08 .1 0 -.17"/><path transform="translate(170.74 0) scale(16.596 16.000)" d="M.02 -.76C.02 -1.08 .52 -1.08 .52 -.76C.52 -.55 .3 -.4 0 0H.54"/></g><g transform="translate(1488.8 796.3) rotate(-11.50) skewX(1.4)"><path transform="translate(0.00 0) scale(16.696 16.000)" d="M0 -1V0H.6"/><path transform="translate(14.02 0) scale(16.696 16.000)" d="M0 -.62H.62M0 -.36H.62"/><path transform="translate(30.22 0) scale(16.696 16.000)" d="M0 0V-1"/><path transform="translate(37.06 0) scale(16.696 16.000)" d="M0 -.07V0"/><path transform="translate(42.41 0) scale(16.696 16.000)" d="M.32 -1A.32 .5 0 1 0 .32 0A.32 .5 0 1 0 .32 -1"/><path transform="translate(56.91 0) scale(15.360 12.080)" d="M0 0V-1L.4 0L.8 -1V0"/></g><g transform="translate(1451.1 701.4) rotate(-11.5)"><path d="M-8.6 0A8.6 8.6 0 0 0 8.6 0z" fill="url(#cg)" stroke="none"/><circle r="8.6" stroke-width="1"/><path d="M-8.6 0H8.6" stroke-width="1"/></g></g><g stroke-linecap="butt" stroke-linejoin="miter" stroke-width="1"><path d="M580 293.5H644" stroke="#f07070"/><path d="M611.5 285V325" stroke="#00c864"/><rect x="607.5" y="289.500" width="8" height="8" stroke="#fff"/></g><circle cx="1870" cy="334.4" r="38.5" fill="#808080" stroke="none"/><path d="M1898.6 334.4L1903.3 337.1L1903.3 331.7zM1890.2 354.6L1891.6 359.9L1895.5 356.0zM1870.0 363.0L1867.3 367.7L1872.7 367.7zM1849.8 354.6L1844.5 356.0L1848.4 359.9zM1841.4 334.4L1836.7 331.7L1836.7 337.1zM1849.8 314.2L1848.4 308.9L1844.5 312.8zM1870.0 305.8L1872.7 301.1L1867.3 301.1zM1890.2 314.2L1895.5 312.8L1891.6 308.9z" fill="#484848" stroke="none"/><g stroke-linecap="butt" stroke-width="1"><path d="M80.500 772V806.500" stroke="#fff"/><path d="M102.500 828.500H137" stroke="#fff"/><path d="M80.500 806.500V828.500M102.500 806.500V828.500" stroke="#00b050"/><path d="M80.500 806.500H102.500M80.500 828.500H102.500" stroke="#f07070"/><path d="M88.500 811.500l3 11l3-9l3 9l3-11" stroke="#fff" fill="none" stroke-linejoin="miter"/><path d="M76 756l4.500 5.500l4.500-5.500M80.500 761.500V767" stroke="#00b050"/><path d="M143 823l9 11M152 823l-9 11" stroke="#f07070"/></g></svg>
<div style="left:0.3px;top:908.2px;width:14.5px;height:14.8px;background:#1a1b1e;border-top:1px solid #8d9095;border-left:1px solid #8d9095;box-sizing:border-box;"></div>
<div style="left:17px;top:908.2px;width:14.5px;height:14.8px;background:#1a1b1e;border-top:1px solid #8d9095;border-left:1px solid #8d9095;box-sizing:border-box;"></div>
<div style="left:34.3px;top:908.2px;width:14.5px;height:14.8px;background:#1a1b1e;border-top:1px solid #8d9095;border-left:1px solid #8d9095;box-sizing:border-box;"></div>
<div style="left:51.3px;top:908.2px;width:14.5px;height:14.8px;background:#1a1b1e;border-top:1px solid #8d9095;border-left:1px solid #8d9095;box-sizing:border-box;"></div>
<div style="left:68.3px;top:908.2px;width:14.5px;height:14.8px;background:#1a1b1e;border-top:1px solid #8d9095;border-left:1px solid #8d9095;box-sizing:border-box;"></div>
<svg style="left:0;top:908px" width="84" height="16" viewBox="0 0 84 16"><path d="M4.5 3.5v9" stroke="#fff" stroke-width="1.4"/><path d="M11.5 3.5v9l-5.5-4.5z" fill="#fff"/><path d="M27.5 3.5v9l-5.5-4.5z" fill="#fff"/><path d="M39.5 3.5v9l5.5-4.5z" fill="#fff"/><path d="M55.5 3.5v9l5.5-4.5z" fill="#fff"/><path d="M62.5 3.5v9" stroke="#fff" stroke-width="1.4"/><path d="M72.5 4.5h6v6h-6zM74 6.5h3M74 8.5h3" stroke="#fff" stroke-width="1" fill="none"/></svg>
<div style="left:126px;top:909px;width:52px;height:16px;background:#1a1b1e;"></div>
<div style="left:179px;top:909px;width:49px;height:16px;background:#1a1b1e;"></div>
<div style="left:229px;top:909px;width:14px;height:16px;background:#1a1b1e;"></div>
<span style="left:88.17px;top:908.9px;height:16px;line-height:16px;font-size:11.5px;color:#fff;font-weight:bold;transform:scaleX(1.0515);transform-origin:0 0;">Model</span>
<span style="left:129.28px;top:908.5px;height:16px;line-height:16px;font-size:11.5px;color:#f2f2f2;transform:scaleX(1.0054);transform-origin:0 0;">Layout1</span>
<span style="left:181.07px;top:908.5px;height:16px;line-height:16px;font-size:11.5px;color:#f2f2f2;transform:scaleX(1.0079);transform-origin:0 0;">Layout2</span>
<svg style="left:231.500px;top:913px" width="8" height="8" viewBox="0 0 8 8"><path d="M4 .5v7M.5 4h7" stroke="#fff" stroke-width="1.100"/></svg>
<span style="left:13.1px;top:935.2px;height:16px;line-height:16px;font-size:11.7px;color:#f8f8f8;font-family:'Liberation Mono',monospace;">:</span>
<span style="left:13.1px;top:950px;height:16px;line-height:16px;font-size:11.7px;color:#f8f8f8;font-family:'Liberation Mono',monospace;">:</span>
<span style="left:13.1px;top:965px;height:16px;line-height:16px;font-size:11.7px;color:#f8f8f8;font-family:'Liberation Mono',monospace;">:</span>
<span style="left:13.1px;top:979.4px;height:16px;line-height:16px;font-size:11.7px;color:#f8f8f8;font-family:'Liberation Mono',monospace;">:</span>
<span style="left:27px;top:979.4px;height:16px;line-height:16px;font-size:11.7px;color:#f8f8f8;font-family:'Liberation Mono',monospace;">_eattedit</span>
<span style="left:9.1px;top:1003px;height:16px;line-height:16px;font-size:11.7px;color:#f4f4f4;font-family:'Liberation Mono',monospace;">:</span>
<span style="left:23.4px;top:1003px;height:16px;line-height:16px;font-size:11.7px;color:#a9a9a9;font-style:italic;font-family:'Liberation Mono',monospace;">Enter command</span>
<svg style="left:0;top:930px" width="8" height="50" viewBox="0 0 8 50"><path d="M1 2l4.5 4.5M5.500 2L1 6.500" stroke="#aaa" stroke-width="1.5"/><path d="M5 32v17" stroke="#fff" stroke-width="2" stroke-dasharray="2 1.5"/></svg>
<svg style="left:1901px;top:928px" width="11" height="73" viewBox="0 0 11 73"><path d="M2.500 11.500l3.500-3.500 3.500 3.500M2.500 62l3.500 3.500 3.500-3.500" stroke="#444" stroke-width="1.2" fill="none"/><rect x="1" y="39" width="10" height="17" fill="#c1c1c1"/></svg>
<span style="left:1.62px;top:1023px;height:16px;line-height:16px;font-size:11px;color:#f2f2f2;transform:scaleX(1.0027);transform-origin:0 0;">Ready</span>
<span style="left:955.57px;top:1023px;height:16px;line-height:16px;font-size:11px;color:#6c6f74;transform:scaleX(1.0090);transform-origin:0 0;">321066.6842, 352845.3921, 0</span>
<span style="left:1112.06px;top:1023px;height:16px;line-height:16px;font-size:11px;color:#fff;transform:scaleX(0.9938);transform-origin:0 0;">Standard-anno</span>
<span style="left:1192.19px;top:1023px;height:16px;line-height:16px;font-size:11px;color:#fff;transform:scaleX(1.0247);transform-origin:0 0;">ISO-25</span>
<span style="left:1235.58px;top:1023px;height:16px;line-height:16px;font-size:11px;color:#fff;transform:scaleX(1.0450);transform-origin:0 0;">Drafting</span>
<span style="left:1286.91px;top:1023px;height:16px;line-height:16px;font-size:11px;color:#6c6f74;transform:scaleX(0.8824);transform-origin:0 0;">SNAP</span>
<span style="left:1323.88px;top:1023px;height:16px;line-height:16px;font-size:11px;color:#6c6f74;transform:scaleX(0.9401);transform-origin:0 0;">GRID</span>
<span style="left:1357.30px;top:1023px;height:16px;line-height:16px;font-size:11px;color:#6c6f74;transform:scaleX(0.9179);transform-origin:0 0;">ORTHO</span>
<span style="left:1401.29px;top:1023px;height:16px;line-height:16px;font-size:11px;color:#6c6f74;transform:scaleX(0.9151);transform-origin:0 0;">POLAR</span>
<span style="left:1443.62px;top:1023px;height:16px;line-height:16px;font-size:11px;color:#6c6f74;transform:scaleX(0.8858);transform-origin:0 0;">ESNAP</span>
<div style="left:1485.1px;top:1023px;width:41.8px;height:17px;background:#3f4247;"></div>
<span style="left:1486.21px;top:1023px;height:16px;line-height:16px;font-size:11px;color:#fff;transform:scaleX(0.8797);transform-origin:0 0;">STRACK</span>
<div style="left:1532.5px;top:1023px;width:23.8px;height:17px;background:#3f4247;"></div>
<span style="left:1533.14px;top:1023px;height:16px;line-height:16px;font-size:11px;color:#fff;transform:scaleX(0.9766);transform-origin:0 0;">LWT</span>
<span style="left:1563.70px;top:1023px;height:16px;line-height:16px;font-size:11px;color:#fff;transform:scaleX(0.9024);transform-origin:0 0;">TILE</span>
<span style="left:1593.52px;top:1023px;height:16px;line-height:16px;font-size:11px;color:#fff;transform:scaleX(1.0165);transform-origin:0 0;">1:500</span>
<div style="left:1628.7px;top:1023px;width:28.7px;height:17px;background:#3f4247;"></div>
<span style="left:1629.44px;top:1023px;height:16px;line-height:16px;font-size:11px;color:#fff;transform:scaleX(0.8600);transform-origin:0 0;">DUCS</span>
<div style="left:1664.8px;top:1023px;width:22.1px;height:17px;background:#3f4247;"></div>
<span style="left:1665.52px;top:1023px;height:16px;line-height:16px;font-size:11px;color:#fff;transform:scaleX(0.8859);transform-origin:0 0;">DYN</span>
<span style="left:1694.40px;top:1023px;height:16px;line-height:16px;font-size:11px;color:#6c6f74;transform:scaleX(0.9198);transform-origin:0 0;">QUAD</span>
<div style="left:1731.4px;top:1023px;width:15.7px;height:17px;background:#3f4247;"></div>
<span style="left:1732.06px;top:1023px;height:16px;line-height:16px;font-size:11px;color:#fff;transform:scaleX(0.9506);transform-origin:0 0;">RT</span>
<div style="left:1753.5px;top:1023px;width:22.8px;height:17px;background:#3f4247;"></div>
<span style="left:1754.20px;top:1023px;height:16px;line-height:16px;font-size:11px;color:#fff;transform:scaleX(0.9092);transform-origin:0 0;">HKA</span>
<span style="left:1782.67px;top:1023px;height:16px;line-height:16px;font-size:11px;color:#6c6f74;transform:scaleX(0.9406);transform-origin:0 0;">LOCKUI</span>
<span style="left:1828.42px;top:1023px;height:16px;line-height:16px;font-size:11px;color:#fff;transform:scaleX(1.0032);transform-origin:0 0;">None</span>
<div style="left:862.5px;top:1023px;width:1px;height:17px;background:#d0d0d0;"></div>
<div style="left:1108.5px;top:1023px;width:1px;height:17px;background:#d0d0d0;"></div>
<div style="left:1189.5px;top:1023px;width:1px;height:17px;background:#d0d0d0;"></div>
<div style="left:1232.5px;top:1023px;width:1px;height:17px;background:#d0d0d0;"></div>
<div style="left:1281.5px;top:1023px;width:1px;height:17px;background:#d0d0d0;"></div>
<div style="left:1318.5px;top:1023px;width:1px;height:17px;background:#d0d0d0;"></div>
<div style="left:1353.5px;top:1023px;width:1px;height:17px;background:#d0d0d0;"></div>
<div style="left:1398.5px;top:1023px;width:1px;height:17px;background:#d0d0d0;"></div>
<div style="left:1441.5px;top:1023px;width:1px;height:17px;background:#d0d0d0;"></div>
<div style="left:1481.5px;top:1023px;width:1px;height:17px;background:#d0d0d0;"></div>
<div style="left:1529.5px;top:1023px;width:1px;height:17px;background:#d0d0d0;"></div>
<div style="left:1559.5px;top:1023px;width:1px;height:17px;background:#d0d0d0;"></div>
<div style="left:1589.5px;top:1023px;width:1px;height:17px;background:#d0d0d0;"></div>
<div style="left:1625.5px;top:1023px;width:1px;height:17px;background:#d0d0d0;"></div>
<div style="left:1661.5px;top:1023px;width:1px;height:17px;background:#d0d0d0;"></div>
<div style="left:1690.5px;top:1023px;width:1px;height:17px;background:#d0d0d0;"></div>
<div style="left:1728.5px;top:1023px;width:1px;height:17px;background:#d0d0d0;"></div>
<div style="left:1750.5px;top:1023px;width:1px;height:17px;background:#d0d0d0;"></div>
<div style="left:1780.5px;top:1023px;width:1px;height:17px;background:#d0d0d0;"></div>
<div style="left:1826.5px;top:1023px;width:1px;height:17px;background:#d0d0d0;"></div>
<div style="left:1859.5px;top:1023px;width:1px;height:17px;background:#d0d0d0;"></div>
<svg style="left:1864px;top:1029px" width="10" height="6" viewBox="0 0 10 6"><path d="M0.500 0.500h8l-4 4.500z" fill="#fff"/></svg>
<div style="left:48px;top:1040px;width:344px;height:2px;background:#f0f0f0;"></div>
<div style="left:1501px;top:1041px;width:47px;height:1px;background:#555;"></div>
<div style="left:1909px;top:1040px;width:3px;height:2px;background:#aaa;"></div>
<svg style="left:5.5px;top:50px" width="3" height="18"><path d="M1.500 0V18" stroke="#fff" stroke-width="2" stroke-dasharray="2 1.500"/></svg>
<svg style="left:22.7px;top:51px" width="16" height="16" viewBox="0 0 16 16"><path d="M1.900 .9h7l3.400 3.400v3.200M1.900 .9v14.400h5.600" stroke="#cfcfcf" stroke-width="1.2" fill="none" /><path d="M8.900 1v3.400h3.400z" fill="#d8d8d8" stroke="none"/><path d="M12.96 7.8l-4.16 5.46h3.12l-1.56 4.68l5.2 -6.5h-3.12z" fill="#f2a630" stroke="none"/></svg>
<svg style="left:48.4px;top:51px" width="16" height="16" viewBox="0 0 16 16"><path d="M1.500 10.500v-8h4l1.500 1.500h5v2.500M1.500 10.500l2-5h10l-1 2.500" stroke="#cfcfcf" stroke-width="1.2" fill="none" /><path d="M11.500 8v6.500M8.500 11.500l3 3l3-3" stroke="#3cb034" stroke-width="1.4" fill="none" /></svg>
<svg style="left:75.9px;top:51px" width="16" height="16" viewBox="0 0 16 16"><path d="M1.500 1.500h13v13h-13z" stroke="#3d8ef5" stroke-width="1.3" fill="none" /><path d="M4.500 1.500v4.500h7v-4.500M4.500 14.500v-5h7v5" stroke="#cfcfcf" stroke-width="1.2" fill="none" /></svg>
<svg style="left:103.3px;top:51px" width="16" height="16" viewBox="0 0 16 16"><path d="M14.500 7v-5.500h-13v13h7" stroke="#3d8ef5" stroke-width="1.3" fill="none" /><path d="M4.500 1.500v4.500h7v-4.500M4.500 14.500v-5h6" stroke="#cfcfcf" stroke-width="1.2" fill="none" /><path d="M8.500 14.500l6-6" stroke="#f2a630" stroke-width="2.2" fill="none" /><path d="M7.300 15.800l0.600-2.300l1.700 1.700z" fill="#cfcfcf" stroke="none"/><path d="M13.600 7.600l1.400-1.400l1.600 1.600l-1.400 1.400z" fill="#e23b3b" stroke="none"/></svg>
<svg style="left:138.4px;top:51px" width="16" height="16" viewBox="0 0 16 16"><path d="M1.900 .9h7l3.400 3.400v4M1.900 .9v14.400h5.600" stroke="#cfcfcf" stroke-width="1.2" fill="none" /><path d="M8.900 1v3.400h3.400z" fill="#d8d8d8" stroke="none"/><circle cx="10.800" cy="11" r="2.200" stroke="#cfcfcf" stroke-width="1.200" fill="none"/><path d="M12.500 12.800l3 3" stroke="#cfcfcf" stroke-width="1.4" fill="none" /></svg>
<svg style="left:164.8px;top:51px" width="16" height="16" viewBox="0 0 16 16"><path d="M4.500 5v-3.500h7v3.500M4.500 11.500h-3v-6.500h13v3M4.500 9.500v5h4" stroke="#cfcfcf" stroke-width="1.2" fill="none" /><path d="M5 12h4v2.500h-4z" fill="#3d8ef5" stroke="none"/><path d="M14.36 8l-4.16 5.46h3.12l-1.56 4.68l5.2 -6.5h-3.12z" fill="#f2a630" stroke="none"/></svg>
<svg style="left:191.9px;top:51px" width="16" height="16" viewBox="0 0 16 16"><path d="M4.500 5v-3.500h7v3.500M4.500 11.500h-3v-6.500h13v3M4.500 9.500v5h3" stroke="#cfcfcf" stroke-width="1.2" fill="none" /><path d="M5 12h3.500v2.500h-3.500z" fill="#3d8ef5" stroke="none"/><path d="M8.500 12.500h7M12.500 9.500l3 3l-3 3" stroke="#3cb034" stroke-width="1.4" fill="none" /></svg>
<svg style="left:227px;top:51px" width="16" height="16" viewBox="0 0 16 16"><path d="M2 6.500h8.500a3.500 3.500 0 0 1 0 7h-1.500M6.500 2l-4.500 4.500l4.500 4.500" stroke="#cfcfcf" stroke-width="1.3" fill="none" /></svg>
<svg style="left:254px;top:51px" width="16" height="16" viewBox="0 0 16 16"><path d="M14 6.500h-8.500a3.500 3.500 0 0 0 0 7h1.500M9.500 2l4.500 4.500l-4.500 4.500" stroke="#cfcfcf" stroke-width="1.3" fill="none" /></svg>
<svg style="left:595.5px;top:51px" width="16" height="16" viewBox="0 0 16 16"><g transform="translate(.2 1.200) scale(.57)"><path d="M11.400 6.400L21.200 16.300" stroke="#cfcfcf" stroke-width="2" fill="none" /><path d="M11.400 6.400C12.500 4.500 15.500 4 18.300 7.500L24.600 2a1.600 1.600 0 0 1 2.300 2.200L21 9.600C22.500 11 24 14 21.200 16.300" stroke="#cfcfcf" stroke-width="2" fill="none" /><path d="M11.400 6.400L.9 12.500L12.200 24.200L21.200 16.300" stroke="#f2a630" stroke-width="2" fill="none" /><path d="M2.800 14L20 17.400L12.200 24.200z" fill="#f2a630" stroke="none"/></g></svg>
<svg style="left:623px;top:51px" width="16" height="16" viewBox="0 0 16 16"><path d="M1.500 14.500l.5-2.500l5.500-5.500l2.500 2.500l-5.500 5.500z" stroke="#cfcfcf" stroke-width="1.2" fill="none" /><path d="M7 5l4 4" stroke="#3d8ef5" stroke-width="1.6" fill="none" /><path d="M8.500 4.500l3-3.500l3 3l-3.500 3z" fill="#4a86e8" stroke="none"/><path d="M12.500 10v5.500M9.800 12.800h5.500" stroke="#5cb82e" stroke-width="2" fill="none" /></svg>
<svg style="left:649.8px;top:51px" width="16" height="16" viewBox="0 0 16 16"><rect x="0.5" y="0.5" width="5" height="5" stroke="#cfcfcf" stroke-width="1" fill="none"/><rect x="2" y="2" width="2" height="2" fill="#3d8ef5"/><rect x="10" y="0.5" width="5" height="5" stroke="#cfcfcf" stroke-width="1" fill="none"/><rect x="11.500" y="2" width="2" height="2" fill="#3d8ef5"/><path d="M3 3.5l2.500 10l2.200-2.800l3 4l2-1.500l-3-4l3.300-1.200z" fill="#2d3035" stroke="#fff" stroke-width="1.100" stroke-linejoin="round"/></svg>
<svg style="left:676.9px;top:51px" width="16" height="16" viewBox="0 0 16 16"><rect x="0.5" y="0.5" width="5" height="5" stroke="#cfcfcf" stroke-width="1" fill="none"/><rect x="10" y="0.5" width="5" height="5" stroke="#3d8ef5" stroke-width="1" fill="none"/><rect x="11.5" y="2" width="2" height="2" fill="#3d8ef5"/><rect x="0.5" y="10" width="5" height="5" stroke="#3d8ef5" stroke-width="1" fill="none"/><rect x="2" y="11.5" width="2" height="2" fill="#3d8ef5"/><path d="M10.08 9.85a3.08 3.08 0 1 1 4.84 0l-1.32 3.3h-2.2z" fill="#bdbdbd"/><rect x="11.4" y="13.26" width="2.2" height="1.76" fill="#d8d8d8"/></svg>
<svg style="left:703.8px;top:51px" width="16" height="16" viewBox="0 0 16 16"><rect x="0.5" y="0.5" width="5" height="5" stroke="#3d8ef5" stroke-width="1" fill="none"/><rect x="2" y="2" width="2" height="2" fill="#3d8ef5"/><rect x="10" y="0.5" width="5" height="5" stroke="#cfcfcf" stroke-width="1" fill="none"/><rect x="0.5" y="10" width="5" height="5" stroke="#cfcfcf" stroke-width="1" fill="none"/><path d="M5 3.5l2.500 10l2.200-2.800l3 4l2-1.500l-3-4l3.300-1.200z" fill="#2d3035" stroke="#fff" stroke-width="1.100" stroke-linejoin="round"/></svg>
<svg style="left:730.9px;top:51px" width="16" height="16" viewBox="0 0 16 16"><rect x="0.5" y="0.5" width="5" height="5" stroke="#3d8ef5" stroke-width="1" fill="none"/><rect x="2" y="2" width="2" height="2" fill="#3d8ef5"/><rect x="10" y="0.5" width="5" height="5" stroke="#3d8ef5" stroke-width="1" fill="none"/><rect x="11.5" y="2" width="2" height="2" fill="#3d8ef5"/><rect x="0.5" y="10" width="5" height="5" stroke="#3d8ef5" stroke-width="1" fill="none"/><rect x="2" y="11.5" width="2" height="2" fill="#3d8ef5"/><path d="M10.08 9.85a3.08 3.08 0 1 1 4.84 0l-1.32 3.3h-2.2z" fill="#ffa81f"/><rect x="11.4" y="13.26" width="2.2" height="1.76" fill="#d8d8d8"/></svg>
<svg style="left:765.8px;top:51px" width="16" height="16" viewBox="0 0 16 16"><path d="M1 1h14v3.500h-14z" fill="#3d8ef5" stroke="none"/><path d="M1.500 4v10.500h13v-10.500M7 4v10.500" stroke="#cfcfcf" stroke-width="1.2" fill="none" /><path d="M3 6.500h2v2h-2zM3 10.500h2v2h-2z" fill="#3d8ef5" stroke="none"/><path d="M9 7h4M9 9.500h4M9 12h4" stroke="#cfcfcf" stroke-width="1" fill="none" /></svg>
<svg style="left:792.8px;top:51px" width="16" height="16" viewBox="0 0 16 16"><path d="M3.500 14.500h11v-9M1.500 12.500l6-10a2 2 0 0 1 3.500 2l-6 10a2 2 0 0 1-3.500-2z" stroke="#cfcfcf" stroke-width="1.2" fill="none" /><path d="M13.500 6.500v7h-6z" fill="#3d8ef5" stroke="none"/><circle cx="3.500" cy="12.500" r="1" stroke="#cfcfcf" fill="none" stroke-width=".9"/></svg>
<svg style="left:819.2px;top:51px" width="16" height="16" viewBox="0 0 16 16"><path d="M14.66 6.65L14.66 9.35L12.64 9.85L12.59 9.97L13.67 11.76L11.76 13.67L9.97 12.59L9.85 12.64L9.35 14.66L6.65 14.66L6.15 12.64L6.03 12.59L4.24 13.67L2.33 11.76L3.41 9.97L3.36 9.85L1.34 9.35L1.34 6.65L3.36 6.15L3.41 6.03L2.33 4.24L4.24 2.33L6.03 3.41L6.15 3.36L6.65 1.34L9.35 1.34L9.85 3.36L9.97 3.41L11.76 2.33L13.67 4.24L12.59 6.03L12.64 6.15z" stroke="#cfcfcf" stroke-width="1.1" fill="none" /><circle cx="8" cy="8" r="2.200" stroke="#cfcfcf" stroke-width="1.100" fill="none"/></svg>
<svg style="left:847px;top:51px" width="16" height="16" viewBox="0 0 16 16"><path d="M3 .5h10a2.500 2.500 0 0 1 2.500 2.500v10a2.500 2.500 0 0 1-2.500 2.500h-10a2.500 2.500 0 0 1-2.500-2.500v-10a2.500 2.500 0 0 1 2.500-2.500z" stroke="#cfcfcf" stroke-width="1.2" fill="none" /><path d="M3.500 4.500h9M3.500 8h9M3.500 11.500h9M6.500 3v3M10.500 6.500v3M5.500 10v3" stroke="#cfcfcf" stroke-width="1.1" fill="none" /></svg>
<svg style="left:874px;top:51px" width="16" height="16" viewBox="0 0 16 16"><path d="M.5 2.500h15v11h-15z" stroke="#cfcfcf" stroke-width="1.2" fill="none" /><path d="M3 5h3.500M3 5v3.500M3 5l4 3.500M13 11h-3.500M13 11v-3.500M13 11l-4-3.500" stroke="#cfcfcf" stroke-width="1.3" fill="none" /></svg>
<svg style="left:1196px;top:51px" width="16" height="16" viewBox="0 0 16 16"><path d="M2 .6h12a1.400 1.400 0 0 1 1.400 1.400v12a1.400 1.400 0 0 1-1.400 1.400h-12a1.400 1.400 0 0 1-1.400-1.400v-12a1.400 1.400 0 0 1 1.400-1.400zM.6 5h14.800M5 5v10.400" stroke="#3d8ef5" stroke-width="1.2" fill="none" /><path d="M2.500 2h1.800v1.600h-1.800zM5.500 2h1.800v1.600h-1.800zM8.500 2h1.800v1.600h-1.800zM11.500 2h1.800v1.600h-1.800z" fill="#3d8ef5" stroke="none"/></svg>
<svg style="left:1336.7px;top:51px" width="16" height="16" viewBox="0 0 16 16"><circle cx="8" cy="8" r="7.300" stroke="#3d8ef5" stroke-width="1.200" fill="none"/><text x="8" y="11.800" font-size="10.500" text-anchor="middle" fill="#bbb" font-family="Liberation Sans">?</text></svg>
<div style="left:128px;top:49px;width:1px;height:21px;background:#5a5d62;"></div>
<div style="left:217px;top:49px;width:1px;height:21px;background:#5a5d62;"></div>
<div style="left:279px;top:49px;width:1px;height:21px;background:#5a5d62;"></div>
<div style="left:756px;top:49px;width:1px;height:21px;background:#5a5d62;"></div>
<div style="left:1327px;top:49px;width:1px;height:21px;background:#5a5d62;"></div>
<div style="left:287px;top:48px;width:300px;height:22px;background:#3f4247;"></div>
<svg style="left:286.8px;top:51px" width="16" height="16" viewBox="0 0 16 16"><path d="M4.200 7.500a4.300 4.300 0 1 1 7.600 0l-1.600 3.300h-4.400z" fill="#ffe24d" stroke="#e9a21c" stroke-width=".9"/><circle cx="7.300" cy="4.800" r="1.700" fill="#fff" opacity=".9"/><rect x="6" y="11.500" width="4" height="2.600" fill="#e0e0e0"/><rect x="6" y="12.500" width="4" height=".7" fill="#999"/></svg>
<svg style="left:305px;top:51px" width="16" height="16" viewBox="0 0 16 16"><rect x="14.1" y="7.1" width="1.8" height="1.8" fill="#f2b01e"/><rect x="12.0" y="12.0" width="1.8" height="1.8" fill="#f2b01e"/><rect x="7.1" y="14.1" width="1.8" height="1.8" fill="#f2b01e"/><rect x="2.2" y="12.0" width="1.8" height="1.8" fill="#f2b01e"/><rect x="0.1" y="7.1" width="1.8" height="1.8" fill="#f2b01e"/><rect x="2.2" y="2.2" width="1.8" height="1.8" fill="#f2b01e"/><rect x="7.1" y="0.1" width="1.8" height="1.8" fill="#f2b01e"/><rect x="12.0" y="2.2" width="1.8" height="1.8" fill="#f2b01e"/><circle cx="8" cy="8" r="4.800" fill="#ffe14d" stroke="#f2c01e" stroke-width=".8"/></svg>
<svg style="left:323.5px;top:51px" width="16" height="16" viewBox="0 0 16 16"><path d="M1 5a2.500 2.500 0 0 1 5 0v1.500" stroke="#cfcfcf" stroke-width="1.1" fill="none" stroke-dasharray="1.500 .7"/><path d="M4.500 6.500h11v9h-11z" fill="#f6e3ad" stroke="none"/><path d="M4.500 8.800h11M4.500 11h11M4.500 13.200h11" stroke="#c58a1e" stroke-width="0.9" fill="none" /><path d="M5 7h10v8h-10z" stroke="#c8922a" stroke-width="1" fill="none" /><path d="M10 7v8" stroke="#c8922a" stroke-width="0.6" fill="none" /></svg>
<svg style="left:341px;top:51px" width="16" height="16" viewBox="0 0 16 16"><path d="M4.500 1h7v5h-7z" fill="#fff" stroke="none"/><path d="M1 5.500h14v6h-14z" fill="#dfe3ea" stroke="none"/><path d="M4 10h8v5h-8z" fill="#fff" stroke="none"/><path d="M5.500 11.800h5v2h-5z" fill="#4a90e2" stroke="none"/><path d="M12 7h1.500v1.500h-1.500z" fill="#3d8ef5" stroke="none"/><path d="M1 5.500h14v6h-3M4 11.500h-3v-6" stroke="#8a93a0" stroke-width="0.7" fill="none" /><path d="M1 9.500h14" stroke="#b8bec8" stroke-width="0.6" fill="none" /></svg>
<div style="left:361px;top:50px;width:18px;height:18px;background:#fff;border:1px solid #000;box-sizing:border-box;border-radius:1px;"></div>
<span style="left:383.5px;top:52px;height:16px;line-height:16px;font-size:12.5px;color:#f2f2f2;">0</span>
<svg style="left:574.2px;top:58.5px" width="8" height="5" viewBox="0 0 8 5"><path d="M.6 .6l3.400 3.400l3.400-3.400" stroke="#f0f0f0" stroke-width="1.050" fill="none"/></svg>
<div style="left:899px;top:48px;width:150px;height:22px;background:#3f4247;"></div>
<span style="left:901.58px;top:50.7px;height:18px;line-height:18px;font-size:12.5px;color:#f2f2f2;transform:scaleX(0.9876);transform-origin:0 0;">2dWireframe</span>
<svg style="left:1036.3px;top:58.5px" width="8" height="5" viewBox="0 0 8 5"><path d="M.6 .6l3.400 3.400l3.400-3.400" stroke="#f0f0f0" stroke-width="1.050" fill="none"/></svg>
<div style="left:1056px;top:48px;width:125px;height:22px;background:#3f4247;"></div>
<span style="left:1058.19px;top:50.7px;height:18px;line-height:18px;font-size:12.5px;color:#f2f2f2;transform:scaleX(1.0076);transform-origin:0 0;">Drafting</span>
<svg style="left:1168.4px;top:58.5px" width="8" height="5" viewBox="0 0 8 5"><path d="M.6 .6l3.400 3.400l3.400-3.400" stroke="#f0f0f0" stroke-width="1.050" fill="none"/></svg>
<span style="left:1214.04px;top:50.7px;height:18px;line-height:18px;font-size:12.5px;color:#4d9cf5;transform:scaleX(1.0309);transform-origin:0 0;">Interface settings</span>
<svg style="left:1350px;top:64px" width="3" height="3"><path d="M3 0v3h-3z" fill="#ddd"/></svg>
<svg style="left:5.5px;top:85px" width="3" height="18"><path d="M1.500 0V18" stroke="#fff" stroke-width="2" stroke-dasharray="2 1.500"/></svg>
<svg style="left:22.7px;top:86px" width="16" height="16" viewBox="0 0 16 16"><path d="M1.900 .9h7l3.400 3.400v3.200M1.900 .9v14.400h5.600" stroke="#cfcfcf" stroke-width="1.2" fill="none" /><path d="M8.900 1v3.400h3.400z" fill="#d8d8d8" stroke="none"/><path d="M12.96 7.8l-4.16 5.46h3.12l-1.56 4.68l5.2 -6.5h-3.12z" fill="#f2a630" stroke="none"/></svg>
<svg style="left:48.4px;top:86px" width="16" height="16" viewBox="0 0 16 16"><path d="M1.500 10.500v-8h4l1.500 1.500h5v2.500M1.500 10.500l2-5h10l-1 2.500" stroke="#cfcfcf" stroke-width="1.2" fill="none" /><path d="M11.500 8v6.500M8.500 11.500l3 3l3-3" stroke="#3cb034" stroke-width="1.4" fill="none" /></svg>
<svg style="left:75.9px;top:86px" width="16" height="16" viewBox="0 0 16 16"><path d="M1.500 1.500h13v13h-13z" stroke="#3d8ef5" stroke-width="1.3" fill="none" /><path d="M4.500 1.500v4.500h7v-4.500M4.500 14.500v-5h7v5" stroke="#cfcfcf" stroke-width="1.2" fill="none" /></svg>
<svg style="left:111.8px;top:86px" width="16" height="16" viewBox="0 0 16 16"><path d="M1.900 .9h7l3.400 3.400v4M1.900 .9v14.400h5.600" stroke="#cfcfcf" stroke-width="1.2" fill="none" /><path d="M8.900 1v3.400h3.400z" fill="#d8d8d8" stroke="none"/><circle cx="10.800" cy="11" r="2.200" stroke="#cfcfcf" stroke-width="1.200" fill="none"/><path d="M12.500 12.800l3 3" stroke="#cfcfcf" stroke-width="1.4" fill="none" /></svg>
<svg style="left:137.7px;top:86px" width="16" height="16" viewBox="0 0 16 16"><path d="M4.500 5v-3.500h7v3.500M4.500 11.500h-3v-6.500h13v3M4.500 9.500v5h4" stroke="#cfcfcf" stroke-width="1.2" fill="none" /><path d="M5 12h4v2.500h-4z" fill="#3d8ef5" stroke="none"/><path d="M14.36 8l-4.16 5.46h3.12l-1.56 4.68l5.2 -6.5h-3.12z" fill="#f2a630" stroke="none"/></svg>
<svg style="left:164.8px;top:86px" width="16" height="16" viewBox="0 0 16 16"><path d="M4.500 5v-3.500h7v3.500M4.500 11.500h-3v-6.500h13v3M4.500 9.500v5h3" stroke="#cfcfcf" stroke-width="1.2" fill="none" /><path d="M5 12h3.500v2.500h-3.500z" fill="#3d8ef5" stroke="none"/><path d="M8.500 12.500h7M12.500 9.500l3 3l-3 3" stroke="#3cb034" stroke-width="1.4" fill="none" /></svg>
<svg style="left:199.9px;top:86px" width="16" height="16" viewBox="0 0 16 16"><path d="M5.500 1.500l5 10.500M10.500 1.500l-5 10.500" stroke="#cfcfcf" stroke-width="1" fill="none" /><circle cx="4.700" cy="13.300" r="1.500" stroke="#3d8ef5" stroke-width="1.200" fill="none"/><circle cx="11.300" cy="13.300" r="1.500" stroke="#3d8ef5" stroke-width="1.200" fill="none"/></svg>
<svg style="left:227px;top:86px" width="16" height="16" viewBox="0 0 16 16"><path d="M9.500 4.500v-3h-7v9h3.500" stroke="#cfcfcf" stroke-width="1.2" fill="none" /><path d="M6.500 5.500h5l3 3v6.500h-8z" stroke="#cfcfcf" stroke-width="1.2" fill="none" /></svg>
<svg style="left:253.3px;top:86px" width="16" height="16" viewBox="0 0 16 16"><path d="M3.500 3.500h5.500v9h-5.500z" fill="#7d8088" stroke="none"/><path d="M5 2.500h-3.500v11.500h4.500M11 2.500h1.500v3" stroke="#f2a630" stroke-width="1.4" fill="none" /><path d="M4.500 4v-2.500h2l0.500-1.500h2l0.500 1.500h2v2.500z" fill="#9a9a9a" stroke="none"/><path d="M7.500 6.500h4.500l2.500 2.500v6h-7z" stroke="#cfcfcf" stroke-width="1.2" fill="none" /></svg>
<svg style="left:280.3px;top:86px" width="16" height="16" viewBox="0 0 16 16"><g transform="translate(.2 1.200) scale(.57)"><path d="M11.400 6.400L21.200 16.300" stroke="#cfcfcf" stroke-width="2" fill="none" /><path d="M11.400 6.400C12.500 4.500 15.500 4 18.300 7.500L24.600 2a1.600 1.600 0 0 1 2.300 2.200L21 9.600C22.500 11 24 14 21.200 16.300" stroke="#cfcfcf" stroke-width="2" fill="none" /><path d="M11.400 6.400L.9 12.500L12.200 24.200L21.200 16.300" stroke="#f2a630" stroke-width="2" fill="none" /><path d="M2.800 14L20 17.400L12.200 24.200z" fill="#f2a630" stroke="none"/></g></svg>
<svg style="left:307.9px;top:86px" width="16" height="16" viewBox="0 0 16 16"><path d="M1.500 14.500l.5-2.500l5.500-5.500l2.500 2.500l-5.500 5.500z" stroke="#cfcfcf" stroke-width="1.2" fill="none" /><path d="M7 5l4 4" stroke="#3d8ef5" stroke-width="1.6" fill="none" /><path d="M8.500 4.500l3-3.500l3 3l-3.500 3z" fill="#4a86e8" stroke="none"/><path d="M12.500 10v5.500M9.800 12.800h5.500" stroke="#5cb82e" stroke-width="2" fill="none" /></svg>
<svg style="left:335px;top:86px" width="16" height="16" viewBox="0 0 16 16"><rect x="0.5" y="0.5" width="5" height="5" stroke="#cfcfcf" stroke-width="1" fill="none"/><rect x="2" y="2" width="2" height="2" fill="#3d8ef5"/><rect x="10" y="0.5" width="5" height="5" stroke="#cfcfcf" stroke-width="1" fill="none"/><rect x="11.500" y="2" width="2" height="2" fill="#3d8ef5"/><path d="M3 3.5l2.500 10l2.200-2.800l3 4l2-1.500l-3-4l3.300-1.200z" fill="#2d3035" stroke="#fff" stroke-width="1.100" stroke-linejoin="round"/></svg>
<svg style="left:370px;top:86px" width="16" height="16" viewBox="0 0 16 16"><path d="M3 3l10 10M13 3l-10 10" stroke="#e23b3b" stroke-width="1.4" fill="none" /></svg>
<svg style="left:405.2px;top:86px" width="16" height="16" viewBox="0 0 16 16"><path d="M2 6.500h8.500a3.500 3.500 0 0 1 0 7h-1.500M6.500 2l-4.500 4.500l4.500 4.500" stroke="#cfcfcf" stroke-width="1.3" fill="none" /></svg>
<svg style="left:431.6px;top:86px" width="16" height="16" viewBox="0 0 16 16"><path d="M14 6.500h-8.500a3.500 3.500 0 0 0 0 7h1.500M9.500 2l4.500 4.500l-4.500 4.500" stroke="#cfcfcf" stroke-width="1.3" fill="none" /></svg>
<svg style="left:467px;top:86px" width="16" height="16" viewBox="0 0 16 16"><path d="M1 1h14v3.500h-14z" fill="#3d8ef5" stroke="none"/><path d="M1.500 4v10.500h13v-10.500M7 4v10.500" stroke="#cfcfcf" stroke-width="1.2" fill="none" /><path d="M3 6.500h2v2h-2zM3 10.500h2v2h-2z" fill="#3d8ef5" stroke="none"/><path d="M9 7h4M9 9.500h4M9 12h4" stroke="#cfcfcf" stroke-width="1" fill="none" /></svg>
<svg style="left:493.8px;top:86px" width="16" height="16" viewBox="0 0 16 16"><path d="M3.500 14.500h11v-9M1.500 12.500l6-10a2 2 0 0 1 3.500 2l-6 10a2 2 0 0 1-3.500-2z" stroke="#cfcfcf" stroke-width="1.2" fill="none" /><path d="M13.500 6.500v7h-6z" fill="#3d8ef5" stroke="none"/><circle cx="3.500" cy="12.500" r="1" stroke="#cfcfcf" fill="none" stroke-width=".9"/></svg>
<svg style="left:520.5px;top:86px" width="16" height="16" viewBox="0 0 16 16"><path d="M14.66 6.65L14.66 9.35L12.64 9.85L12.59 9.97L13.67 11.76L11.76 13.67L9.97 12.59L9.85 12.64L9.35 14.66L6.65 14.66L6.15 12.64L6.03 12.59L4.24 13.67L2.33 11.76L3.41 9.97L3.36 9.85L1.34 9.35L1.34 6.65L3.36 6.15L3.41 6.03L2.33 4.24L4.24 2.33L6.03 3.41L6.15 3.36L6.65 1.34L9.35 1.34L9.85 3.36L9.97 3.41L11.76 2.33L13.67 4.24L12.59 6.03L12.64 6.15z" stroke="#cfcfcf" stroke-width="1.1" fill="none" /><circle cx="8" cy="8" r="2.200" stroke="#cfcfcf" stroke-width="1.100" fill="none"/></svg>
<svg style="left:547.5px;top:86px" width="16" height="16" viewBox="0 0 16 16"><path d="M3 .5h10a2.500 2.500 0 0 1 2.500 2.500v10a2.500 2.500 0 0 1-2.500 2.500h-10a2.500 2.500 0 0 1-2.500-2.500v-10a2.500 2.500 0 0 1 2.500-2.500z" stroke="#cfcfcf" stroke-width="1.2" fill="none" /><path d="M3.500 4.500h9M3.500 8h9M3.500 11.500h9M6.500 3v3M10.500 6.500v3M5.500 10v3" stroke="#cfcfcf" stroke-width="1.1" fill="none" /></svg>
<svg style="left:575px;top:86px" width="16" height="16" viewBox="0 0 16 16"><path d="M.5 2.500h15v11h-15z" stroke="#cfcfcf" stroke-width="1.2" fill="none" /><path d="M3 5h3.500M3 5v3.500M3 5l4 3.500M13 11h-3.500M13 11v-3.500M13 11l-4-3.500" stroke="#cfcfcf" stroke-width="1.3" fill="none" /></svg>
<svg style="left:609.8px;top:86px" width="16" height="16" viewBox="0 0 16 16"><circle cx="8" cy="8" r="7.300" stroke="#3d8ef5" stroke-width="1.200" fill="none"/><text x="8" y="11.800" font-size="10.500" text-anchor="middle" fill="#bbb" font-family="Liberation Sans">?</text></svg>
<svg style="left:659.6px;top:86px" width="16" height="16" viewBox="0 0 16 16"><path d="M1.500 3.500h11v11h-11z" stroke="#cfcfcf" stroke-width="1.2" fill="none" /><path d="M4 9a3.200 3.200 0 0 1 5.500-2M10.500 9a3.200 3.200 0 0 1-5.500 2" stroke="#3cb034" stroke-width="1.8" fill="none" /><path d="M8.500 5l2.500 2.500h-3zM6 13l-2.500-2.500h3z" fill="#3cb034" stroke="none"/><path d="M15.500 12v3.500h-3.500z" fill="#cfcfcf" stroke="none"/></svg>
<svg style="left:695.5px;top:86px" width="16" height="16" viewBox="0 0 16 16"><circle cx="9.500" cy="6.500" r="5.300" stroke="#cfcfcf" stroke-width="1.300" fill="none"/><path d="M5.500 10.500l-4.500 4.500" stroke="#cfcfcf" stroke-width="2" fill="none" /><path d="M7 6.500h5M9.500 4v5" stroke="#3d8ef5" stroke-width="1.4" fill="none" /></svg>
<svg style="left:721.8px;top:86px" width="16" height="16" viewBox="0 0 16 16"><circle cx="9.500" cy="6.500" r="5.300" stroke="#cfcfcf" stroke-width="1.300" fill="none"/><path d="M5.500 10.500l-4.500 4.500" stroke="#cfcfcf" stroke-width="2" fill="none" /><path d="M7 6.500h5" stroke="#3d8ef5" stroke-width="1.4" fill="none" /></svg>
<svg style="left:749px;top:86px" width="16" height="16" viewBox="0 0 16 16"><circle cx="9.500" cy="6.500" r="5.300" stroke="#cfcfcf" stroke-width="1.300" fill="none"/><path d="M5.500 10.500l-4.500 4.500" stroke="#cfcfcf" stroke-width="2" fill="none" /><path d="M6.500 6.500h6M9.500 3.500v6" stroke="#3d8ef5" stroke-width="1.2" fill="none" /><path d="M9.500 2l1.500 2h-3zM9.500 11l1.500-2h-3zM5 6.500l2-1.500v3zM14 6.500l-2-1.500v3z" fill="#3d8ef5" stroke="none"/><path d="M15.500 12v3.500h-3.500z" fill="#cfcfcf" stroke="none"/></svg>
<svg style="left:776px;top:86px" width="16" height="16" viewBox="0 0 16 16"><circle cx="9.500" cy="6.500" r="5.300" stroke="#cfcfcf" stroke-width="1.300" fill="none"/><path d="M5.500 10.500l-4.500 4.500" stroke="#cfcfcf" stroke-width="2" fill="none" /><path d="M7.500 8.500a2.500 2.500 0 1 0 2-4.500h-2.500" stroke="#3d8ef5" stroke-width="1.2" fill="none" /><path d="M8 2l-2.500 2l2.500 2z" fill="#3d8ef5" stroke="none"/></svg>
<svg style="left:810.9px;top:86px" width="16" height="16" viewBox="0 0 16 16"><path d="M8 14v-6l-5.500-3M8 8l5.500-3" stroke="#3d8ef5" stroke-width="1.3" fill="none" /><path d="M8 15.500l-2-3h4zM1 3.500l3.500 0l-1.800 3zM15 3.500l-3.500 0l1.800 3z" fill="#3d8ef5" stroke="none"/><path d="M4 2.500a5.500 5.500 0 0 1 8 0M14 9a6 6 0 0 1-3 4.500M2 9a6 6 0 0 0 3 4.500" stroke="#3d8ef5" stroke-width="1.1" fill="none" /><path d="M15.500 12.500v3h-3z" fill="#cfcfcf" stroke="none"/></svg>
<svg style="left:838.6px;top:86px" width="16" height="16" viewBox="0 0 16 16"><circle cx="8" cy="8" r="7" stroke="#cfcfcf" stroke-width="1.200" fill="none"/><path d="M11.500 3.500l-2 6l-3-2z" fill="#3d8ef5" stroke="none"/><path d="M11.500 3.500l-7 9l5-3z" stroke="#cfcfcf" stroke-width="0.9" fill="none" /></svg>
<svg style="left:873px;top:86px" width="16" height="16" viewBox="0 0 16 16"><path d="M.5 8q7.500-7 15 0q-7.500 7-15 0z" fill="#e8e8e8" stroke="none"/><ellipse cx="8" cy="8" rx="3.800" ry="3.300" fill="#b8bcc8"/></svg>
<svg style="left:899.3px;top:86px" width="16" height="16" viewBox="0 0 16 16"><path d="M3.500 13v-10" stroke="#3cb034" stroke-width="1.6" fill="none" /><path d="M3.500 .5l2.300 3.500h-4.600z" fill="#3cb034" stroke="none"/><path d="M3 12.500h10" stroke="#e23b3b" stroke-width="1.6" fill="none" /><path d="M15.500 12.500l-3.500 2.300v-4.600z" fill="#e23b3b" stroke="none"/><rect x="2" y="11" width="3" height="3" fill="#fff"/><path d="M6 6.500h4v4h-4z" stroke="#999" stroke-width="1.2" fill="none" /></svg>
<svg style="left:926.9px;top:86px" width="16" height="16" viewBox="0 0 16 16"><path d="M1.500 4.500h2l1-1.500h4l1 1.500h5a1 1 0 0 1 1 1v7a1 1 0 0 1-1 1h-12a1 1 0 0 1-1-1v-7a1 1 0 0 1 1-1z" stroke="#cfcfcf" stroke-width="1.2" fill="none" /><circle cx="8.500" cy="9" r="3.200" stroke="#cfcfcf" stroke-width="1.200" fill="none"/><circle cx="8.500" cy="9" r="1.300" stroke="#cfcfcf" stroke-width="1" fill="none"/><path d="M12.500 4.800h2v1.600h-2z" fill="#e23b3b" stroke="none"/></svg>
<svg style="left:953.8px;top:86px" width="16" height="16" viewBox="0 0 16 16"><path d="M1.500 .5v15M1.500 1l13 11v3.500h-13M5.500 4.500v11M9.500 8v7.500M1.500 8h8M1.500 12h13M12.500 10.500v5" stroke="#cfcfcf" stroke-width="1.1" fill="none" /></svg>
<svg style="left:1063px;top:86px" width="16" height="16" viewBox="0 0 16 16"><path d="M1.500 6.500h9v8h-9z" stroke="#cfcfcf" stroke-width="1.2" fill="none" /><path d="M2 14l3-4l2 2l2-3v5z" fill="#3d6fc0" stroke="none"/><path d="M7.500 2.500h7v7h-7z" stroke="#3d8ef5" stroke-width="1.1" fill="none" /><path d="M6 1h3v3h-3zM13 1h3v3h-3zM13 8h3v3h-3zM6 8h3v3h-3z" fill="#3d8ef5" stroke="none"/></svg>
<svg style="left:1098px;top:86px" width="16" height="16" viewBox="0 0 16 16"><path d="M8 .8l6.700 3v8.400l-6.700 3l-6.700-3v-8.400zM1.300 3.800l6.700 3l6.700-3M8 6.800v8.400" stroke="#cfcfcf" stroke-width="1.2" fill="none" /></svg>
<svg style="left:1125px;top:86px" width="16" height="16" viewBox="0 0 16 16"><path d="M.5 4.500q6.500-6 13 0q-6.500 6-13 0z" fill="#e8e8e8" stroke="none"/><ellipse cx="7" cy="4.500" rx="3.300" ry="2.800" fill="#b8bcc8"/><path d="M8.500 8.500h7v7h-7z" stroke="#3d8ef5" stroke-width="1.2" fill="#2d3035" /><path d="M10.500 8.500v2.300h3v-2.300M10.500 15.500v-2.200h3v2.200" stroke="#3d8ef5" stroke-width="0.9" fill="none" /></svg>
<svg style="left:1159.9px;top:86px" width="16" height="16" viewBox="0 0 16 16"><path d="M.5 .5h15v15h-15z" stroke="#cfcfcf" stroke-width="1.2" fill="none" /><path d="M3 3h4v4h-4zM3 9.500h4v3.500h-4zM9.500 3h3.500v10h-3.500z" stroke="#cfcfcf" stroke-width="1.2" fill="none" /></svg>
<svg style="left:1187px;top:86px" width="16" height="16" viewBox="0 0 16 16"><path d="M2.500 .5h7l4 4v11h-11z" stroke="#cfcfcf" stroke-width="1.2" fill="none" /><path d="M5 4h2.500v2.500h-2.500zM5 10h6v2.500h-6z" stroke="#cfcfcf" stroke-width="1.1" fill="none" /></svg>
<svg style="left:1214px;top:86px" width="16" height="16" viewBox="0 0 16 16"><rect x="0.5" y="0.5" width="5" height="5" stroke="#3d8ef5" stroke-width="1" fill="none"/><rect x="2" y="2" width="2" height="2" fill="#3d8ef5"/><rect x="10" y="0.5" width="5" height="5" stroke="#3d8ef5" stroke-width="1" fill="none"/><rect x="11.5" y="2" width="2" height="2" fill="#3d8ef5"/><rect x="0.5" y="10" width="5" height="5" stroke="#3d8ef5" stroke-width="1" fill="none"/><rect x="2" y="11.5" width="2" height="2" fill="#3d8ef5"/><path d="M10.08 9.85a3.08 3.08 0 1 1 4.84 0l-1.32 3.3h-2.2z" fill="#ffa81f"/><rect x="11.4" y="13.26" width="2.2" height="1.76" fill="#d8d8d8"/><path d="M15.500 12.500v3h-3z" fill="#cfcfcf" stroke="none"/></svg>
<div style="left:101px;top:84px;width:1px;height:21px;background:#5a5d62;"></div>
<div style="left:190px;top:84px;width:1px;height:21px;background:#5a5d62;"></div>
<div style="left:360px;top:84px;width:1px;height:21px;background:#5a5d62;"></div>
<div style="left:395px;top:84px;width:1px;height:21px;background:#5a5d62;"></div>
<div style="left:457px;top:84px;width:1px;height:21px;background:#5a5d62;"></div>
<div style="left:600px;top:84px;width:1px;height:21px;background:#5a5d62;"></div>
<div style="left:685px;top:84px;width:1px;height:21px;background:#5a5d62;"></div>
<div style="left:801px;top:84px;width:1px;height:21px;background:#5a5d62;"></div>
<div style="left:863px;top:84px;width:1px;height:21px;background:#5a5d62;"></div>
<div style="left:1088px;top:84px;width:1px;height:21px;background:#5a5d62;"></div>
<div style="left:1150px;top:84px;width:1px;height:21px;background:#5a5d62;"></div>
<svg style="left:643.5px;top:85px" width="3" height="18"><path d="M1.500 0V18" stroke="#fff" stroke-width="2" stroke-dasharray="2 1.500"/></svg>
<div style="left:979px;top:83px;width:75px;height:22px;background:#3f4247;"></div>
<div style="left:996px;top:90.5px;width:50px;height:5px;background:#e6e6e6;"></div>
<svg style="left:986px;top:85px" width="10" height="17"><path d="M0 0h10v12.500l-5 4.500l-5-4.500z" fill="#0a78d8"/></svg>
<svg style="left:5.5px;top:120px" width="3" height="18"><path d="M1.500 0V18" stroke="#fff" stroke-width="2" stroke-dasharray="2 1.500"/></svg>
<svg style="left:22px;top:121.3px" width="16" height="16" viewBox="0 0 16 16"><path d="M4.700 1h9.500l-4 5.800h-9.700z" stroke="#cfcfcf" stroke-width="1.1" fill="none" /><path d="M2.400 8.200l-1.900 2.600h9.700l3-4.200M2.400 12l-1.900 2.600h9.700l3-4.200" stroke="#cfcfcf" stroke-width="1.1" fill="none" /><path d="M5.500 3.800h4l1.500-1.800" stroke="#cfcfcf" stroke-width="0.9" fill="none" /><path d="M15.500 12.500v3h-3z" fill="#cfcfcf" stroke="none"/></svg>
<div style="left:47px;top:118px;width:300px;height:22px;background:#3f4247;"></div>
<svg style="left:47px;top:121.3px" width="16" height="16" viewBox="0 0 16 16"><path d="M4.200 7.500a4.300 4.300 0 1 1 7.600 0l-1.600 3.300h-4.400z" fill="#ffe24d" stroke="#e9a21c" stroke-width=".9"/><circle cx="7.300" cy="4.800" r="1.700" fill="#fff" opacity=".9"/><rect x="6" y="11.500" width="4" height="2.600" fill="#e0e0e0"/><rect x="6" y="12.500" width="4" height=".7" fill="#999"/></svg>
<svg style="left:64.8px;top:121.3px" width="16" height="16" viewBox="0 0 16 16"><rect x="14.1" y="7.1" width="1.8" height="1.8" fill="#f2b01e"/><rect x="12.0" y="12.0" width="1.8" height="1.8" fill="#f2b01e"/><rect x="7.1" y="14.1" width="1.8" height="1.8" fill="#f2b01e"/><rect x="2.2" y="12.0" width="1.8" height="1.8" fill="#f2b01e"/><rect x="0.1" y="7.1" width="1.8" height="1.8" fill="#f2b01e"/><rect x="2.2" y="2.2" width="1.8" height="1.8" fill="#f2b01e"/><rect x="7.1" y="0.1" width="1.8" height="1.8" fill="#f2b01e"/><rect x="12.0" y="2.2" width="1.8" height="1.8" fill="#f2b01e"/><circle cx="8" cy="8" r="4.800" fill="#ffe14d" stroke="#f2c01e" stroke-width=".8"/></svg>
<svg style="left:83.5px;top:121.3px" width="16" height="16" viewBox="0 0 16 16"><path d="M1 5a2.500 2.500 0 0 1 5 0v1.500" stroke="#cfcfcf" stroke-width="1.1" fill="none" stroke-dasharray="1.500 .7"/><path d="M4.500 6.500h11v9h-11z" fill="#f6e3ad" stroke="none"/><path d="M4.500 8.800h11M4.500 11h11M4.500 13.200h11" stroke="#c58a1e" stroke-width="0.9" fill="none" /><path d="M5 7h10v8h-10z" stroke="#c8922a" stroke-width="1" fill="none" /><path d="M10 7v8" stroke="#c8922a" stroke-width="0.6" fill="none" /></svg>
<svg style="left:101px;top:121.3px" width="16" height="16" viewBox="0 0 16 16"><path d="M4.500 1h7v5h-7z" fill="#fff" stroke="none"/><path d="M1 5.500h14v6h-14z" fill="#dfe3ea" stroke="none"/><path d="M4 10h8v5h-8z" fill="#fff" stroke="none"/><path d="M5.500 11.800h5v2h-5z" fill="#4a90e2" stroke="none"/><path d="M12 7h1.500v1.500h-1.500z" fill="#3d8ef5" stroke="none"/><path d="M1 5.500h14v6h-3M4 11.500h-3v-6" stroke="#8a93a0" stroke-width="0.7" fill="none" /><path d="M1 9.500h14" stroke="#b8bec8" stroke-width="0.6" fill="none" /></svg>
<div style="left:121px;top:120.3px;width:18px;height:18px;background:#fff;border:1px solid #000;box-sizing:border-box;border-radius:1px;"></div>
<span style="left:143.8px;top:122.2px;height:16px;line-height:16px;font-size:12.5px;color:#f2f2f2;">0</span>
<svg style="left:334.6px;top:128.8px" width="8" height="5" viewBox="0 0 8 5"><path d="M.6 .6l3.400 3.400l3.400-3.400" stroke="#f0f0f0" stroke-width="1.050" fill="none"/></svg>
<svg style="left:355.5px;top:121.3px" width="16" height="16" viewBox="0 0 16 16"><path d="M4.700 1h9.500l-4 5.800h-9.700z" stroke="#cfcfcf" stroke-width="1.1" fill="none" /><path d="M2.400 8.200l-1.900 2.600h9.700l3-4.200M2.400 12l-1.900 2.600h9.700l3-4.200" stroke="#cfcfcf" stroke-width="1.1" fill="none" /><path d="M5.500 3.800h4l1.500-1.800" stroke="#cfcfcf" stroke-width="0.9" fill="none" /><path d="M8.500 12.500l2.500 2.500l4.500-5" stroke="#3cb034" stroke-width="2" fill="none" /></svg>
<svg style="left:382.5px;top:121.3px" width="16" height="16" viewBox="0 0 16 16"><path d="M4.700 1h9.500l-4 5.800h-9.700z" stroke="#cfcfcf" stroke-width="1.1" fill="none" /><path d="M2.400 8.200l-1.900 2.600h9.700l3-4.200M2.400 12l-1.900 2.600h9.700l3-4.200" stroke="#cfcfcf" stroke-width="1.1" fill="none" /><path d="M5.500 3.800h4l1.500-1.800" stroke="#cfcfcf" stroke-width="0.9" fill="none" /><path d="M9.3 12.5L15.7 12.5M10.2 10.2L14.8 14.8M12.5 9.3L12.5 15.7M14.8 10.2L10.2 14.8" stroke="#3d8ef5" stroke-width="1.4" fill="none" /></svg>
<div style="left:408px;top:119px;width:1px;height:21px;background:#5a5d62;"></div>
<div style="left:416px;top:118px;width:159px;height:22px;background:#3f4247;"></div>
<div style="left:421px;top:120.3px;width:18px;height:18px;background:#fff;border:1px solid #000;box-sizing:border-box;border-radius:1px;"></div>
<span style="left:444.06px;top:119.9px;height:18px;line-height:18px;font-size:12.5px;color:#f2f2f2;transform:scaleX(0.9397);transform-origin:0 0;">ByLayer</span>
<svg style="left:562.6px;top:128.8px" width="8" height="5" viewBox="0 0 8 5"><path d="M.6 .6l3.400 3.400l3.400-3.400" stroke="#f0f0f0" stroke-width="1.050" fill="none"/></svg>
<div style="left:582px;top:118px;width:159px;height:22px;background:#3f4247;"></div>
<div style="left:588px;top:130px;width:71px;height:1px;background:#f0f0f0;"></div>
<span style="left:663.26px;top:120.9px;height:18px;line-height:18px;font-size:12.5px;color:#f2f2f2;transform:scaleX(0.9352);transform-origin:0 0;">ByLayer</span>
<svg style="left:728.3px;top:128.8px" width="8" height="5" viewBox="0 0 8 5"><path d="M.6 .6l3.400 3.400l3.400-3.400" stroke="#f0f0f0" stroke-width="1.050" fill="none"/></svg>
<div style="left:748px;top:118px;width:159px;height:22px;background:#3f4247;"></div>
<div style="left:753px;top:128.5px;width:71px;height:2px;background:#f0f0f0;"></div>
<span style="left:828.48px;top:120.9px;height:18px;line-height:18px;font-size:12.5px;color:#f2f2f2;transform:scaleX(0.9240);transform-origin:0 0;">ByLayer</span>
<svg style="left:894.6px;top:128.8px" width="8" height="5" viewBox="0 0 8 5"><path d="M.6 .6l3.400 3.400l3.400-3.400" stroke="#f0f0f0" stroke-width="1.050" fill="none"/></svg>
<svg style="left:3.5px;top:198px" width="3" height="18"><path d="M1.500 0V18" stroke="#fff" stroke-width="2" stroke-dasharray="2 1.500"/></svg>
<div style="left:279px;top:175px;width:1px;height:92px;background:#46494e;"></div>
<div style="left:640px;top:175px;width:1px;height:92px;background:#46494e;"></div>
<div style="left:811px;top:175px;width:1px;height:92px;background:#46494e;"></div>
<div style="left:1108px;top:175px;width:1px;height:92px;background:#46494e;"></div>
<div style="left:1307px;top:175px;width:1px;height:92px;background:#46494e;"></div>
<div style="left:1514px;top:175px;width:1px;height:92px;background:#46494e;"></div>
<div style="left:1646px;top:175px;width:1px;height:92px;background:#46494e;"></div>
<div style="left:1753px;top:175px;width:1px;height:92px;background:#46494e;"></div>
<svg style="left:26px;top:180px" width="34" height="34" viewBox="0 0 34 34"><path d="M3.500 28.500l25.500-25.500" stroke="#cfcfcf" stroke-width="1.3" fill="none" /><rect x="27.2" y="0.6" width="4.3" height="4.3" stroke="#3d8ef5" stroke-width="1.1" fill="#2d3035"/><rect x="1" y="27.6" width="4.3" height="4.3" stroke="#3d8ef5" stroke-width="1.1" fill="#2d3035"/></svg>
<span style="left:30.22px;top:214.2px;height:16px;line-height:16px;font-size:11.5px;color:#f2f2f2;transform:scaleX(1.0678);transform-origin:0 0;">Line</span>
<svg style="left:39.8px;top:235.3px" width="6.400" height="3.400" viewBox="0 0 6.400 3.400"><path d="M0 0h6.400l-3.200 3.400z" fill="#fff"/></svg>
<svg style="left:72px;top:181px" width="34" height="34" viewBox="0 0 34 34"><path d="M3.500 31.500v-17M3.500 12a14 14 0 0 1 27-1" stroke="#cfcfcf" stroke-width="1.3" fill="none" /><rect x="1" y="11.5" width="4.5" height="4.5" stroke="#3d8ef5" stroke-width="1.1" fill="#2d3035"/><rect x="26" y="11.5" width="4.5" height="4.5" stroke="#3d8ef5" stroke-width="1.1" fill="#2d3035"/><rect x="1" y="26.5" width="4.5" height="4.5" stroke="#3d8ef5" stroke-width="1.1" fill="#2d3035"/></svg>
<span style="left:66.42px;top:214.2px;height:16px;line-height:16px;font-size:11.5px;color:#f2f2f2;transform:scaleX(1.0681);transform-origin:0 0;">Polyline</span>
<svg style="left:85.7px;top:235.3px" width="6.400" height="3.400" viewBox="0 0 6.400 3.400"><path d="M0 0h6.400l-3.200 3.400z" fill="#fff"/></svg>
<svg style="left:120px;top:181px" width="34" height="34" viewBox="0 0 34 34"><path d="M26.500 15.500a12.500 12.500 0 1 0-13 11" stroke="#cfcfcf" stroke-width="1.3" fill="none" /><rect x="1.5" y="3.5" width="3" height="3" stroke="#3d8ef5" stroke-width="1.1" fill="#2d3035"/><path d="M24 12.500h5v5h-5z" fill="#ddd" stroke="none"/><rect x="12.5" y="23" width="4.5" height="4.5" stroke="#3d8ef5" stroke-width="1.1" fill="#2d3035"/></svg>
<span style="left:126.00px;top:214.2px;height:16px;line-height:16px;font-size:11.5px;color:#f2f2f2;transform:scaleX(0.9401);transform-origin:0 0;">Arc</span>
<svg style="left:131.5px;top:235.3px" width="6.400" height="3.400" viewBox="0 0 6.400 3.400"><path d="M0 0h6.400l-3.200 3.400z" fill="#fff"/></svg>
<svg style="left:163px;top:180.5px" width="34" height="34" viewBox="0 0 34 34"><circle cx="15.500" cy="16" r="14.200" stroke="#cfcfcf" stroke-width="1.300" fill="none"/><path d="M16 16.500h14" stroke="#cfcfcf" stroke-width="1.6" fill="none" /><rect x="13" y="14" width="5" height="5" stroke="#3d8ef5" stroke-width="1.1" fill="#2d3035"/><rect x="27.5" y="14.2" width="4.5" height="4.5" stroke="#3d8ef5" stroke-width="1.1" fill="#2d3035"/></svg>
<span style="left:163.74px;top:214.2px;height:16px;line-height:16px;font-size:11.5px;color:#f2f2f2;transform:scaleX(0.9683);transform-origin:0 0;">Circle</span>
<svg style="left:175.8px;top:235.3px" width="6.400" height="3.400" viewBox="0 0 6.400 3.400"><path d="M0 0h6.400l-3.200 3.400z" fill="#fff"/></svg>
<svg style="left:204px;top:181px" width="16" height="16" viewBox="0 0 16 16"><path d="M2.600 3.500H13.700V12.300H2.600z" stroke="#cfcfcf" stroke-width="1.2" fill="none" /><rect x="12.6" y="2.4" width="2.2" height="2.2" stroke="#3d8ef5" stroke-width="1.1" fill="#2d3035"/><rect x="1.5" y="10.9" width="2.2" height="2.2" stroke="#3d8ef5" stroke-width="1.1" fill="#2d3035"/></svg>
<svg style="left:223.8px;top:187.8px" width="6.400" height="3.400" viewBox="0 0 6.400 3.400"><path d="M0 0h6.400l-3.200 3.400z" fill="#fff"/></svg>
<svg style="left:238px;top:181px" width="16" height="16" viewBox="0 0 16 16"><circle cx="8" cy="8" r="3.500" stroke="#cfcfcf" stroke-width="1.200" fill="none"/></svg>
<svg style="left:257.8px;top:187.8px" width="6.400" height="3.400" viewBox="0 0 6.400 3.400"><path d="M0 0h6.400l-3.200 3.400z" fill="#fff"/></svg>
<svg style="left:204px;top:203.3px" width="16" height="16" viewBox="0 0 16 16"><ellipse cx="8" cy="8" rx="7" ry="4.600" transform="rotate(-42 8 8)" stroke="#cfcfcf" stroke-width="1.200" fill="none"/><path d="M2.500 13.500l11-11M4 5l3.500 3.500" stroke="#cfcfcf" stroke-width="1" fill="none" /><rect x="0.6" y="12.4" width="2.8" height="2.8" stroke="#cfcfcf" stroke-width="1.1" fill="#2d3035"/><rect x="12.6" y="0.6" width="2.8" height="2.8" stroke="#cfcfcf" stroke-width="1.1" fill="#2d3035"/><rect x="2.2" y="3.2" width="2.2" height="2.2" stroke="#cfcfcf" stroke-width="1.1" fill="#2d3035"/></svg>
<svg style="left:223.8px;top:210.1px" width="6.400" height="3.400" viewBox="0 0 6.400 3.400"><path d="M0 0h6.400l-3.200 3.400z" fill="#fff"/></svg>
<svg style="left:238px;top:203.3px" width="16" height="16" viewBox="0 0 16 16"><path d="M.8 .8h14.400v14.400h-14.400z" stroke="#cfcfcf" stroke-width="1" fill="none" stroke-dasharray="1.200 1.200"/><path d="M3.500 3.500h10v10h-4.500v-4.500h-5.500z" stroke="#cfcfcf" stroke-width="1.3" fill="none" /><path d="M1 14l3-3M3 15l3.500-3.500M6 15l2.500-2.500M1 11l2-2" stroke="#cfcfcf" stroke-width="0.8" fill="none" /></svg>
<svg style="left:257.8px;top:210.1px" width="6.400" height="3.400" viewBox="0 0 6.400 3.400"><path d="M0 0h6.400l-3.200 3.400z" fill="#fff"/></svg>
<svg style="left:203.5px;top:225.3px" width="16" height="16" viewBox="0 0 16 16"><path d="M.8 3.300h12v12h-12z" stroke="#cfcfcf" stroke-width="1.1" fill="none" /><circle cx="10" cy="6.300" r="6.200" stroke="#9a9a9a" stroke-width="1" fill="none"/><path d="M3.800 3.800H12.300V12Q5.500 12.500 3.800 5.500z" fill="#3d8ef5" stroke="none"/><path d="M5 8l4-4M6 10.500l6-6M8.500 11.500l3.800-3.800" stroke="#1d3f7a" stroke-width="1" fill="none" /></svg>
<svg style="left:223.8px;top:232.1px" width="6.400" height="3.400" viewBox="0 0 6.400 3.400"><path d="M0 0h6.400l-3.200 3.400z" fill="#fff"/></svg>
<svg style="left:238px;top:225.3px" width="16" height="16" viewBox="0 0 16 16"><g transform="translate(-1 -1) scale(1.13)"><path d="M5 12.500a2.800 2.800 0 0 1-1.500-5.200a2.800 2.800 0 0 1 4-3.300a2.800 2.800 0 0 1 5 1.500a2.800 2.800 0 0 1 0 5.500a2.800 2.800 0 0 1-4.500 2a2.800 2.800 0 0 1-3-.5z" stroke="#cfcfcf" stroke-width="1.1" fill="none" /></g></svg>
<span style="left:129.58px;top:247.1px;height:16px;line-height:16px;font-size:11.5px;color:#f2f2f2;font-weight:bold;transform:scaleX(1.0415);transform-origin:0 0;">Draw</span>
<svg style="left:304px;top:180.5px" width="34" height="34" viewBox="0 0 34 34"><path d="M15 1h-3a11 11 0 0 0-11 11v17.500h14" stroke="#3d8ef5" stroke-width="1.15" fill="none" /><path d="M18 28l9-9l2.300 2.300l-9 9z" stroke="#f2a630" stroke-width="1.1" fill="none" /><path d="M19.200 29.200l9-9" stroke="#f2a630" stroke-width="0.9" fill="none" /><path d="M15.800 31.800l1.700-3.500l1.800 1.800z" fill="#cfcfcf" stroke="none"/><path d="M27.200 18.500l1.300-1.300a1.600 1.600 0 0 1 2.400 2.400l-1.300 1.300z" fill="#3d8ef5" stroke="none"/></svg>
<span style="left:308.55px;top:214.2px;height:16px;line-height:16px;font-size:11.5px;color:#f2f2f2;transform:scaleX(1.0299);transform-origin:0 0;">Edit</span>
<span style="left:292.41px;top:229.3px;height:16px;line-height:16px;font-size:11.5px;color:#f2f2f2;transform:scaleX(1.0733);transform-origin:0 0;">Polyline</span>
<svg style="left:338.8px;top:236.8px" width="6.400" height="3.400" viewBox="0 0 6.400 3.400"><path d="M0 0h6.400l-3.200 3.400z" fill="#fff"/></svg>
<svg style="left:356px;top:180px" width="34" height="34" viewBox="0 0 34 34"><path d="M1 .6h11v11h-11z" stroke="#cfcfcf" stroke-width="1.15" fill="none" /><path d="M17 3h4.500v8.500M18 8.500l3.500 3.500l3.500-3.500" stroke="#cfcfcf" stroke-width="1.1" fill="none" /><path d="M16 16h11v11h-11zM21.500 21.500h11v11h-11z" stroke="#3d8ef5" stroke-width="1.2" fill="none" /><path d="M7 16l-6 8h3.500l-2 7l7.500-9.500h-4l3-5.500z" fill="none" stroke="none"/><path d="M7.500 16.500l-5.500 7h4l-2.500 7l7.500-9.500h-4l2.500-4.500z" stroke="#f2a630" stroke-width="1.2" fill="none" /></svg>
<span style="left:358.72px;top:214.2px;height:16px;line-height:16px;font-size:11.5px;color:#f2f2f2;transform:scaleX(1.0158);transform-origin:0 0;">Copy</span>
<span style="left:348.80px;top:229.3px;height:16px;line-height:16px;font-size:11.5px;color:#f2f2f2;transform:scaleX(1.0398);transform-origin:0 0;">Guided</span>
<svg style="left:391px;top:236.8px" width="6.400" height="3.400" viewBox="0 0 6.400 3.400"><path d="M0 0h6.400l-3.200 3.400z" fill="#fff"/></svg>
<svg style="left:403px;top:181px" width="16" height="16" viewBox="0 0 16 16"><path d="M8 .8l7.200 7.200l-7.200 7.200l-7.200-7.200zM8 1.500v13M1.500 8h13" stroke="#3d8ef5" stroke-width="1.2" fill="none" /></svg>
<span style="left:420.32px;top:181px;height:16px;line-height:16px;font-size:11.5px;color:#f2f2f2;transform:scaleX(1.0638);transform-origin:0 0;">Move</span>
<svg style="left:403px;top:203.3px" width="16" height="16" viewBox="0 0 16 16"><path d="M.6 .5h5v5h-5z" stroke="#cfcfcf" stroke-width="1.1" fill="none" /><path d="M8.200 .6h3v6" stroke="#cfcfcf" stroke-width="1.1" fill="none" /><path d="M8 3.800l3.200 3l3.200-3" stroke="#cfcfcf" stroke-width="1.1" fill="none" /><path d="M7.600 7.500h5v5h-5zM10.500 10.400h5v5h-5z" stroke="#3d8ef5" stroke-width="1.2" fill="#2d3035" /></svg>
<span style="left:420.72px;top:203.3px;height:16px;line-height:16px;font-size:11.5px;color:#f2f2f2;transform:scaleX(1.0120);transform-origin:0 0;">Copy</span>
<svg style="left:403px;top:225.3px" width="16" height="16" viewBox="0 0 16 16"><path d="M9.300 1.500H.8V14.500H8.500" stroke="#cfcfcf" stroke-width="1.2" fill="none" /><path d="M9.300 1.500l5.700 13H8.500" stroke="#3d8ef5" stroke-width="1.2" fill="none" /><path d="M8.500 3v11" stroke="#3d8ef5" stroke-width="1" fill="none" stroke-dasharray="1 1"/></svg>
<span style="left:420.84px;top:225.3px;height:16px;line-height:16px;font-size:11.5px;color:#f2f2f2;transform:scaleX(1.0019);transform-origin:0 0;">Stretch</span>
<svg style="left:472.8px;top:181px" width="16" height="16" viewBox="0 0 16 16"><path d="M10.500 2.800a6.300 6.300 0 1 0 3.800 5.700" stroke="#3d8ef5" stroke-width="1.2" fill="none" /><path d="M9.500 .8l3.500 2.500l-3 2.500" stroke="#3d8ef5" stroke-width="1.2" fill="none" /><rect x="5.8" y="6.8" width="3" height="3" stroke="#cfcfcf" stroke-width="1.1" fill="#2d3035"/><path d="M12.500 3.500l2.500-2" stroke="#3d8ef5" stroke-width="1.1" fill="none" /></svg>
<span style="left:490.46px;top:181px;height:16px;line-height:16px;font-size:11.5px;color:#f2f2f2;transform:scaleX(1.0259);transform-origin:0 0;">Rotate</span>
<svg style="left:472.8px;top:203.3px" width="16" height="16" viewBox="0 0 16 16"><path d="M7.500 0v16" stroke="#cfcfcf" stroke-width="1" fill="none" /><path d="M5.800 3V12.300H.6z" stroke="#cfcfcf" stroke-width="1.1" fill="none" /><path d="M9.500 3V12.300H14.900z" stroke="#3d8ef5" stroke-width="1.2" fill="none" /></svg>
<span style="left:490.40px;top:203.3px;height:16px;line-height:16px;font-size:11.5px;color:#f2f2f2;transform:scaleX(1.0876);transform-origin:0 0;">Mirror</span>
<svg style="left:472.8px;top:225.3px" width="16" height="16" viewBox="0 0 16 16"><path d="M.8 7.800V2.100h14.900v11.400H8.200" stroke="#3d8ef5" stroke-width="1.2" fill="none" /><path d="M.8 7.800h7.400v5.700H.8z" stroke="#cfcfcf" stroke-width="1.2" fill="none" /><path d="M9.500 9.500l4.400-4.400M10.800 5h3.200v3.200" stroke="#cfcfcf" stroke-width="1.1" fill="none" /></svg>
<span style="left:490.98px;top:225.3px;height:16px;line-height:16px;font-size:11.5px;color:#f2f2f2;transform:scaleX(0.9174);transform-origin:0 0;">Scale</span>
<svg style="left:541px;top:181px" width="16" height="16" viewBox="0 0 16 16"><path d="M8.400 4.400H.6V12.700H8.400" stroke="#3d8ef5" stroke-width="1.2" fill="none" /><path d="M8.400 4.400H15.400V12.700H8.400" stroke="#cfcfcf" stroke-width="1.2" fill="none" /><path d="M8.400 0V16" stroke="#cfcfcf" stroke-width="1.3" fill="none" /></svg>
<svg style="left:560.8px;top:187.8px" width="6.400" height="3.400" viewBox="0 0 6.400 3.400"><path d="M0 0h6.400l-3.200 3.400z" fill="#fff"/></svg>
<svg style="left:575px;top:181px" width="16" height="16" viewBox="0 0 16 16"><path d="M3 3l10.300 10.300M13.300 3l-10.300 10.300" stroke="#e04545" stroke-width="1.15" fill="none" /></svg>
<svg style="left:598.5px;top:181px" width="16" height="16" viewBox="0 0 16 16"><path d="M11 .7H8A7 7 0 0 0 1 7.700V15.400H7.300" stroke="#3d8ef5" stroke-width="1.2" fill="none" /><path d="M10.300 14.300l4.800-4.200" stroke="#f2a630" stroke-width="2.3" fill="none" /><path d="M8.900 15.500l.5-2.100l1.600 1.500z" fill="#bbb" stroke="none"/><path d="M14.300 9.200l1.200-1l1.200 1.500l-1.200 1z" fill="#f08080" stroke="none"/></svg>
<svg style="left:618.8px;top:187.8px" width="6.400" height="3.400" viewBox="0 0 6.400 3.400"><path d="M0 0h6.400l-3.200 3.400z" fill="#fff"/></svg>
<svg style="left:541px;top:203.3px" width="16" height="16" viewBox="0 0 16 16"><path d="M.6 15.500V9.500L10 .8" stroke="#3d8ef5" stroke-width="1.2" fill="none" /><path d="M11 .7H15.800" stroke="#3d8ef5" stroke-width="1.2" fill="none" /><path d="M.6 9V.7H10" stroke="#cfcfcf" stroke-width="1.1" fill="none" stroke-dasharray="2.200 1.200"/></svg>
<svg style="left:560.8px;top:210.1px" width="6.400" height="3.400" viewBox="0 0 6.400 3.400"><path d="M0 0h6.400l-3.200 3.400z" fill="#fff"/></svg>
<svg style="left:575px;top:203.3px" width="16" height="16" viewBox="0 0 16 16"><circle cx="6" cy="9.600" r="5.700" fill="#54575b" stroke="#cfcfcf" stroke-width="1.300"/><path d="M9.800 5.200l2.500-2" stroke="#cfcfcf" stroke-width="1.8" fill="none" /><path d="M13 3l2.500-2M13.500 3.800h2.500M12.800 2.300l-.7-2" stroke="#f2a630" stroke-width="1" fill="none" /></svg>
<svg style="left:598.5px;top:203.3px" width="16" height="16" viewBox="0 0 16 16"><path d="M.6 8h7.400" stroke="#cfcfcf" stroke-width="1.2" fill="none" /><path d="M9 8h3" stroke="#3d8ef5" stroke-width="1.2" fill="none" stroke-dasharray="1.100 1"/><rect x="13.2" y="6.5" width="3" height="3" stroke="#3d8ef5" stroke-width="1.1" fill="#2d3035"/></svg>
<svg style="left:618.8px;top:210.1px" width="6.400" height="3.400" viewBox="0 0 6.400 3.400"><path d="M0 0h6.400l-3.200 3.400z" fill="#fff"/></svg>
<svg style="left:541px;top:225.3px" width="16" height="16" viewBox="0 0 16 16"><path d="M.6 .3h6v3h-6zM9.600 .3h6v3h-6zM.6 6.300h6v3h-6zM9.600 6.300h6v3h-6zM.6 12.300h6v3h-6zM9.600 12.300h6v3h-6z" stroke="#3d8ef5" stroke-width="1.2" fill="none" /></svg>
<svg style="left:560.8px;top:232.1px" width="6.400" height="3.400" viewBox="0 0 6.400 3.400"><path d="M0 0h6.400l-3.200 3.400z" fill="#fff"/></svg>
<svg style="left:575px;top:225.3px" width="16" height="16" viewBox="0 0 16 16"><path d="M13 5.800A5 5 0 0 0 3 5.800V15.400H9" stroke="#3d8ef5" stroke-width="1.3" fill="none" /><path d="M10.700 5.800A2.700 2.700 0 0 0 5.300 5.800V13.400H9" stroke="#cfcfcf" stroke-width="1.2" fill="none" /></svg>
<svg style="left:598.9px;top:225.3px" width="16" height="16" viewBox="0 0 16 16"><path d="M9.700 .6H15.800V6.400" stroke="#9a9a9a" stroke-width="1.2" fill="none" /><path d="M5.700 3.200H13.300V10.100" stroke="#cfcfcf" stroke-width="1.2" fill="none" /><path d="M.7 5.900h9.600v9.600h-9.600z" stroke="#cfcfcf" stroke-width="1.3" fill="#2b2b2e" /></svg>
<svg style="left:618.8px;top:232.1px" width="6.400" height="3.400" viewBox="0 0 6.400 3.400"><path d="M0 0h6.400l-3.200 3.400z" fill="#fff"/></svg>
<span style="left:441.81px;top:247.1px;height:16px;line-height:16px;font-size:11.5px;color:#f2f2f2;font-weight:bold;transform:scaleX(1.0023);transform-origin:0 0;">Modify</span>
<svg style="left:662px;top:180.5px" width="33" height="33" viewBox="0 0 33 33"><path d="M1 1.500h18M10 1.500v22h22" stroke="#cfcfcf" stroke-width="1.5" fill="none" /><path d="M0 27.500h32M0 31.500h32" stroke="#cfcfcf" stroke-width="1.1" fill="none" /></svg>
<span style="left:654.48px;top:214.2px;height:16px;line-height:16px;font-size:11.5px;color:#f2f2f2;transform:scaleX(1.1113);transform-origin:0 0;">Multiline</span>
<span style="left:661.96px;top:229.3px;height:16px;line-height:16px;font-size:11.5px;color:#f2f2f2;transform:scaleX(1.0293);transform-origin:0 0;">Text</span>
<svg style="left:687.8px;top:236.8px" width="6.400" height="3.400" viewBox="0 0 6.400 3.400"><path d="M0 0h6.400l-3.200 3.400z" fill="#fff"/></svg>
<svg style="left:719px;top:191.8px" width="32" height="10" viewBox="0 0 32 10"><path d="M.6 0v10M31.200 0v10M2 5h28" stroke="#3d8ef5" stroke-width="1.1" fill="none" /><path d="M1.200 5l6.300-3v6zM30.600 5l-6.300-3v6z" fill="#3d8ef5" stroke="none"/></svg>
<span style="left:706.54px;top:214.2px;height:16px;line-height:16px;font-size:11.5px;color:#f2f2f2;transform:scaleX(1.0405);transform-origin:0 0;">Dimension</span>
<svg style="left:769.9px;top:181px" width="16" height="16" viewBox="0 0 16 16"><path d="M.6 0V8.500M15.600 0V11" stroke="#3d8ef5" stroke-width="1.2" fill="none" /><path d="M1.500 3.800H14.700M1.500 3.800l2.800-2.300M1.500 3.800l2.800 2.300M14.700 3.800l-2.800-2.300M14.700 3.800l-2.800 2.300" stroke="#3d8ef5" stroke-width="1.1" fill="none" /><path d="M.6 15.800V9.800L15.600 12.800V15.800" stroke="#cfcfcf" stroke-width="1.2" fill="none" /></svg>
<svg style="left:789.8px;top:187.8px" width="6.400" height="3.400" viewBox="0 0 6.400 3.400"><path d="M0 0h6.400l-3.200 3.400z" fill="#fff"/></svg>
<svg style="left:769.9px;top:203.3px" width="16" height="16" viewBox="0 0 16 16"><path d="M6 2.200h9M10.600 2.200v10.800" stroke="#3d8ef5" stroke-width="1.25" fill="none" /><path d="M5.500 3.500h-3.500M4.500 1l-3 2.500l3 2.500M2 6.500c0 3-1 4.500-1 7M6 11.500h-4.500M3.500 9.500l-2.500 2l2.500 2.500" stroke="#cfcfcf" stroke-width="1" fill="none" /></svg>
<svg style="left:789.8px;top:210.1px" width="6.400" height="3.400" viewBox="0 0 6.400 3.400"><path d="M0 0h6.400l-3.200 3.400z" fill="#fff"/></svg>
<svg style="left:769.9px;top:225.3px" width="16" height="16" viewBox="0 0 16 16"><path d="M.6 .8h14.800v3h-14.800z" fill="#c8ccd4" stroke="none"/><path d="M.6 .8h14.800v14.600h-14.800zM.6 3.800h14.800M.6 7.700h14.800M.6 11.600h14.800M5.500 3.800v11.600M10.500 3.800v11.600" stroke="#cfcfcf" stroke-width="1.2" fill="none" /></svg>
<span style="left:691.97px;top:247.1px;height:16px;line-height:16px;font-size:11.5px;color:#f2f2f2;font-weight:bold;transform:scaleX(1.0191);transform-origin:0 0;">Annotations</span>
<svg style="left:830.5px;top:182px" width="32" height="28" viewBox="0 0 32 28"><path d="M14.200 13.6H31.300L18.400 26.8H.8z" stroke="#cfcfcf" stroke-width="1.3" fill="#484b50" /><path d="M14.200 7.4H31.300L18.400 20.6H.8z" stroke="#cfcfcf" stroke-width="1.3" fill="#3a3d42" /><path d="M14.200 1.2H31.300L18.400 14.4H.8z" stroke="#cfcfcf" stroke-width="1.3" fill="none" /></svg>
<span style="left:825.50px;top:214.6px;height:16px;line-height:16px;font-size:11.5px;color:#f2f2f2;transform:scaleX(0.9815);transform-origin:0 0;">Layers...</span>
<svg style="left:875px;top:180.6px" width="16" height="16" viewBox="0 0 16 16"><path d="M4.700 1h9.500l-4 5.800h-9.700z" stroke="#cfcfcf" stroke-width="1" fill="none" /><path d="M2.400 8.200l-1.900 2.600h9.700l3-4.200M2.400 12l-1.900 2.600h9.700l3-4.200" stroke="#cfcfcf" stroke-width="1" fill="none" /><path d="M5.500 3.800h4l1.500-1.800" stroke="#cfcfcf" stroke-width="0.8" fill="none" /><circle cx="11.500" cy="11" r="3" fill="#2d3035" stroke="#cfcfcf" stroke-width="1"/><path d="M13.500 13.500l2.500 2.500" stroke="#cfcfcf" stroke-width="1.2" fill="none" /></svg>
<svg style="left:875px;top:203.7px" width="16" height="16" viewBox="0 0 16 16"><path d="M4.700 1h9.500l-4 5.800h-9.700z" stroke="#cfcfcf" stroke-width="1" fill="none" /><path d="M2.400 8.200l-1.900 2.600h9.700l3-4.200M2.400 12l-1.900 2.600h9.700l3-4.200" stroke="#cfcfcf" stroke-width="1" fill="none" /><path d="M5.500 3.800h4l1.500-1.800" stroke="#cfcfcf" stroke-width="0.8" fill="none" /><path d="M9.64 9.95a3.64 3.64 0 1 1 5.72 0l-1.56 3.9h-2.6z" fill="#ffa81f"/><rect x="11.2" y="13.98" width="2.6" height="2.08" fill="#d8d8d8"/></svg>
<svg style="left:875px;top:225.2px" width="16" height="16" viewBox="0 0 16 16"><path d="M4.700 1h9.500l-4 5.800h-9.700z" stroke="#cfcfcf" stroke-width="1" fill="none" /><path d="M2.400 8.200l-1.900 2.600h9.700l3-4.200M2.400 12l-1.900 2.600h9.700l3-4.200" stroke="#cfcfcf" stroke-width="1" fill="none" /><path d="M5.500 3.800h4l1.500-1.800" stroke="#cfcfcf" stroke-width="0.8" fill="none" /><path d="M8 9h8v2.500h-8z" fill="#3d8ef5" stroke="none"/><path d="M8 11.500h8v4.500h-8z" fill="#e8e8e8" stroke="none"/><path d="M9 13h6M9 14.800h6" stroke="#555" stroke-width="0.8" fill="none" /></svg>
<div style="left:895px;top:178px;width:200px;height:21.2px;background:#3f4247;"></div>
<svg style="left:896.3px;top:181.1px" width="15" height="15" viewBox="0 0 16 16"><path d="M4.200 7.500a4.300 4.300 0 1 1 7.600 0l-1.600 3.300h-4.400z" fill="#ffe24d" stroke="#e9a21c" stroke-width=".9"/><circle cx="7.300" cy="4.800" r="1.700" fill="#fff" opacity=".9"/><rect x="6" y="11.500" width="4" height="2.600" fill="#e0e0e0"/><rect x="6" y="12.500" width="4" height=".7" fill="#999"/></svg>
<svg style="left:914.1px;top:181.1px" width="15" height="15" viewBox="0 0 16 16"><rect x="14.1" y="7.1" width="1.8" height="1.8" fill="#f2b01e"/><rect x="12.0" y="12.0" width="1.8" height="1.8" fill="#f2b01e"/><rect x="7.1" y="14.1" width="1.8" height="1.8" fill="#f2b01e"/><rect x="2.2" y="12.0" width="1.8" height="1.8" fill="#f2b01e"/><rect x="0.1" y="7.1" width="1.8" height="1.8" fill="#f2b01e"/><rect x="2.2" y="2.2" width="1.8" height="1.8" fill="#f2b01e"/><rect x="7.1" y="0.1" width="1.8" height="1.8" fill="#f2b01e"/><rect x="12.0" y="2.2" width="1.8" height="1.8" fill="#f2b01e"/><circle cx="8" cy="8" r="4.800" fill="#ffe14d" stroke="#f2c01e" stroke-width=".8"/></svg>
<svg style="left:933.1px;top:181.1px" width="15" height="15" viewBox="0 0 16 16"><path d="M1 5a2.500 2.500 0 0 1 5 0v1.500" stroke="#cfcfcf" stroke-width="1.1" fill="none" stroke-dasharray="1.500 .7"/><path d="M4.500 6.500h11v9h-11z" fill="#f6e3ad" stroke="none"/><path d="M4.500 8.800h11M4.500 11h11M4.500 13.200h11" stroke="#c58a1e" stroke-width="0.9" fill="none" /><path d="M5 7h10v8h-10z" stroke="#c8922a" stroke-width="1" fill="none" /><path d="M10 7v8" stroke="#c8922a" stroke-width="0.6" fill="none" /></svg>
<svg style="left:950.5px;top:181.1px" width="15" height="15" viewBox="0 0 16 16"><path d="M4.500 1h7v5h-7z" fill="#fff" stroke="none"/><path d="M1 5.500h14v6h-14z" fill="#dfe3ea" stroke="none"/><path d="M4 10h8v5h-8z" fill="#fff" stroke="none"/><path d="M5.500 11.800h5v2h-5z" fill="#4a90e2" stroke="none"/><path d="M12 7h1.500v1.500h-1.500z" fill="#3d8ef5" stroke="none"/><path d="M1 5.500h14v6h-3M4 11.500h-3v-6" stroke="#8a93a0" stroke-width="0.7" fill="none" /><path d="M1 9.500h14" stroke="#b8bec8" stroke-width="0.6" fill="none" /></svg>
<div style="left:970px;top:181px;width:15px;height:15px;background:#fff;border:1px solid #000;box-sizing:border-box;border-radius:1px;"></div>
<span style="left:989.5px;top:181.5px;height:16px;line-height:16px;font-size:12.5px;color:#f2f2f2;">0</span>
<svg style="left:1081.3px;top:189px" width="8" height="5" viewBox="0 0 8 5"><path d="M.6 .6l3.400 3.400l3.400-3.400" stroke="#f0f0f0" stroke-width="1.050" fill="none"/></svg>
<svg style="left:899px;top:203.7px" width="16" height="16" viewBox="0 0 16 16"><path d="M4.700 1h9.500l-4 5.800h-9.700z" stroke="#cfcfcf" stroke-width="1" fill="none" /><path d="M2.400 8.200l-1.900 2.600h9.700l3-4.200M2.400 12l-1.900 2.600h9.700l3-4.200" stroke="#cfcfcf" stroke-width="1" fill="none" /><path d="M5.500 3.800h4l1.500-1.800" stroke="#cfcfcf" stroke-width="0.8" fill="none" /><path d="M9.64 9.95a3.64 3.64 0 1 1 5.72 0l-1.56 3.9h-2.6z" fill="#c4c4c4"/><rect x="11.2" y="13.98" width="2.6" height="2.08" fill="#d8d8d8"/></svg>
<svg style="left:922.5px;top:203.7px" width="16" height="16" viewBox="0 0 16 16"><path d="M4.700 1h9.500l-4 5.800h-9.700z" stroke="#cfcfcf" stroke-width="1" fill="none" /><path d="M2.400 8.200l-1.900 2.600h9.700l3-4.200" stroke="#3d8ef5" stroke-width="1.4" fill="none" /><path d="M3 8.300h9l-1.200 1.700h-9z" fill="#3d8ef5" stroke="none"/><path d="M2.400 12l-1.900 2.600h9.700l3-4.200" stroke="#cfcfcf" stroke-width="1" fill="none" /></svg>
<svg style="left:946.3px;top:203.7px" width="16" height="16" viewBox="0 0 16 16"><path d="M4.700 1h9.500l-4 5.800h-9.700z" stroke="#cfcfcf" stroke-width="1" fill="none" /><path d="M2.400 8.200l-1.900 2.600h9.700l3-4.200M2.400 12l-1.900 2.600h9.700l3-4.200" stroke="#cfcfcf" stroke-width="1" fill="none" /><path d="M5.500 3.800h4l1.500-1.800" stroke="#cfcfcf" stroke-width="0.8" fill="none" /></svg>
<svg style="left:971px;top:203.7px" width="16" height="16" viewBox="0 0 16 16"><path d="M5 1.500h9.500l-4 5.800h-9.700z" stroke="#cfcfcf" stroke-width="1.1" fill="none" /><path d="M8.2 12.0L14.8 12.0M9.2 9.7L13.8 14.3M11.5 8.7L11.5 15.3M13.8 9.7L9.2 14.3" stroke="#3d8ef5" stroke-width="1.4" fill="none" /><circle cx="11.500" cy="12" r="2.200" fill="#3d8ef5"/></svg>
<svg style="left:994.7px;top:203.7px" width="16" height="16" viewBox="0 0 16 16"><path d="M4.700 1h9.500l-4 5.800h-9.700z" stroke="#cfcfcf" stroke-width="1" fill="none" /><path d="M2.400 8.200l-1.900 2.600h9.700l3-4.200M2.400 12l-1.900 2.600h9.700l3-4.200" stroke="#cfcfcf" stroke-width="1" fill="none" /><path d="M5.500 3.800h4l1.500-1.800" stroke="#cfcfcf" stroke-width="0.8" fill="none" /><circle cx="12" cy="11.500" r="2.800" fill="#ff9a1f"/><path d="M7.7 11.5L16.3 11.5M9.0 8.5L15.0 14.5M12.0 7.2L12.0 15.8M15.0 8.5L9.0 14.5" stroke="#ff9a1f" stroke-width="1.4" fill="none" /></svg>
<svg style="left:1019px;top:203.7px" width="16" height="16" viewBox="0 0 16 16"><path d="M5 1.500h9.500l-4 5.800h-9.700z" stroke="#cfcfcf" stroke-width="1.1" fill="none" /><path d="M9.500 10.500h6v5h-6z" fill="#9a9a9a" stroke="none"/><path d="M10.800 10.500v-1.500a1.700 1.700 0 0 1 3.400 0v1.500" stroke="#9a9a9a" stroke-width="1.2" fill="none" /></svg>
<svg style="left:1043px;top:203.7px" width="16" height="16" viewBox="0 0 16 16"><path d="M5 1.500h9.500l-4 5.800h-9.700z" stroke="#cfcfcf" stroke-width="1.1" fill="none" /><path d="M8 11h5.500v4.500h-5.500z" stroke="#cfcfcf" stroke-width="1.2" fill="none" /><path d="M11.800 11v-1.500a1.700 1.700 0 0 1 3.400 0" stroke="#cfcfcf" stroke-width="1.2" fill="none" /></svg>
<svg style="left:1066.8px;top:203.7px" width="16" height="16" viewBox="0 0 16 16"><path d="M4.700 1h9.500l-4 5.800h-9.700z" stroke="#cfcfcf" stroke-width="1" fill="none" /><path d="M2.400 8.200l-1.900 2.600h9.700l3-4.200M2.400 12l-1.900 2.600h9.700l3-4.200" stroke="#cfcfcf" stroke-width="1" fill="none" /><path d="M5.500 3.800h4l1.500-1.800" stroke="#cfcfcf" stroke-width="0.8" fill="none" /><path d="M9 12.500l2.500 2.500l4.500-5" stroke="#3cb034" stroke-width="1.8" fill="none" /></svg>
<svg style="left:1087px;top:210.5px" width="6.400" height="3.400" viewBox="0 0 6.400 3.400"><path d="M0 0h6.400l-3.200 3.400z" fill="#fff"/></svg>
<div style="left:895px;top:222.2px;width:200px;height:21px;background:#3f4247;"></div>
<span style="left:898.71px;top:224.2px;height:18px;line-height:18px;font-size:12.5px;color:#f2f2f2;transform:scaleX(0.9861);transform-origin:0 0;">Select layerstate</span>
<svg style="left:1081.3px;top:233px" width="8" height="5" viewBox="0 0 8 5"><path d="M.6 .6l3.400 3.400l3.400-3.400" stroke="#f0f0f0" stroke-width="1.050" fill="none"/></svg>
<span style="left:942.84px;top:247.1px;height:16px;line-height:16px;font-size:11.5px;color:#f2f2f2;font-weight:bold;transform:scaleX(0.9586);transform-origin:0 0;">Layers</span>
<svg style="left:1126px;top:180px" width="32" height="33" viewBox="0 0 32 33"><path d="M10.500 1.500h18.300v18h-18.300z" stroke="#cfcfcf" stroke-width="1.25" fill="none" /><path d="M8.800 .6H4.400V10M.9 5.400l3.500 4.800l3.500-4.800" stroke="#cfcfcf" stroke-width="1.2" fill="none" /><path d="M6.600 12.500A9.600 9.600 0 1 0 19.100 24.300" stroke="#cfcfcf" stroke-width="1.25" fill="none" /><path d="M12.800 12.300l5 3.500" stroke="#cfcfcf" stroke-width="1.1" fill="none" /><rect x="27.200" y="18.300" width="2.900" height="2.900" fill="#d4d6dc"/></svg>
<span style="left:1126.13px;top:214.1px;height:16px;line-height:16px;font-size:11.5px;color:#f2f2f2;transform:scaleX(1.0376);transform-origin:0 0;">Insert</span>
<span style="left:1122.57px;top:228.9px;height:16px;line-height:16px;font-size:11.5px;color:#f2f2f2;transform:scaleX(1.0115);transform-origin:0 0;">Block...</span>
<svg style="left:1167.7px;top:181px" width="16" height="16" viewBox="0 0 16 16"><path d="M6 6.500V.6h9.400v9.800H10" stroke="#cfcfcf" stroke-width="1.2" fill="none" /><circle cx="5.100" cy="11.100" r="4.600" stroke="#cfcfcf" stroke-width="1.200" fill="none"/><rect x="14.300" y="9.200" width="2.200" height="2.200" fill="#fff"/></svg>
<span style="left:1185.84px;top:181px;height:16px;line-height:16px;font-size:11.5px;color:#f2f2f2;transform:scaleX(0.9727);transform-origin:0 0;">Create Block</span>
<svg style="left:1167.7px;top:203.3px" width="16" height="16" viewBox="0 0 16 16"><path d="M4.700 10.500V.6h10.700v6.600" stroke="#cfcfcf" stroke-width="1.2" fill="none" /><path d="M9.200 14a4.700 4.700 0 1 1-2.500-7" stroke="#cfcfcf" stroke-width="1.2" fill="none" /><path d="M6.800 7l2.200 1.800" stroke="#cfcfcf" stroke-width="1" fill="none" /><path d="M15.44 7.6l-4.64 6.09h3.48l-1.74 5.22l5.8 -7.25h-3.48z" fill="#f2a630" stroke="none"/></svg>
<span style="left:1186.05px;top:203.3px;height:16px;line-height:16px;font-size:11.5px;color:#f2f2f2;transform:scaleX(1.0283);transform-origin:0 0;">Blockify</span>
<svg style="left:1167.7px;top:225.3px" width="16" height="16" viewBox="0 0 16 16"><path d="M6 6.500V.6h9.400v8.500" stroke="#cfcfcf" stroke-width="1.2" fill="none" /><circle cx="5.100" cy="11.100" r="4.600" stroke="#cfcfcf" stroke-width="1.200" fill="none"/><path d="M10.800 14.300l4.600-4" stroke="#f2a630" stroke-width="2.3" fill="none" /><path d="M9.300 15.700l.6-2.200l1.600 1.600z" fill="#fff" stroke="none"/><path d="M14.700 9.300l1.200-1l1.300 1.500l-1.200 1z" fill="#f07070" stroke="none"/></svg>
<span style="left:1186.09px;top:225.3px;height:16px;line-height:16px;font-size:11.5px;color:#f2f2f2;transform:scaleX(0.9933);transform-origin:0 0;">Edit Block</span>
<svg style="left:1239px;top:232.6px" width="6.400" height="3.400" viewBox="0 0 6.400 3.400"><path d="M0 0h6.400l-3.200 3.400z" fill="#fff"/></svg>
<svg style="left:1265.8px;top:181px" width="16" height="16" viewBox="0 0 16 16"><path d="M4.400 10.700V.6H15V7.500" stroke="#cfcfcf" stroke-width="1.2" fill="none" /><path d="M4.300 15.600a4.500 4.500 0 0 1-2.600-7.300" stroke="#cfcfcf" stroke-width="1.2" fill="none" /><path d="M6.500 8l1.500 1.200" stroke="#cfcfcf" stroke-width="1" fill="none" /><path d="M8.800 8.600h7v7h-7z" stroke="#3d8ef5" stroke-width="1.2" fill="#2d3035" /><path d="M10.800 8.600v2.300h3.200v-2.300M10.800 15.600v-2.200h3.200v2.200" stroke="#3d8ef5" stroke-width="0.9" fill="none" /></svg>
<svg style="left:1265px;top:203.3px" width="16" height="16" viewBox="0 0 16 16"><path d="M.8 6.500l3.500-3.500h4.500l3.500 3.500v3l-6 6.300l-5.500-5.800z" stroke="#cfcfcf" stroke-width="1.5" fill="none" /><path d="M2.500 11.500l3.800 3.800" stroke="#cfcfcf" stroke-width="1" fill="none" /><rect x="3.500" y="5" width="2" height="2" fill="#fff"/><path d="M10 5.800l5-4.300" stroke="#f2a630" stroke-width="2.2" fill="none" /><path d="M8.600 7l.5-2l1.500 1.400z" fill="#fff" stroke="none"/><path d="M14.600 1l1.200-1l1.200 1.500l-1.200 1z" fill="#f07070" stroke="none"/><path d="M5.500 10l1 1l1-1l1 1" stroke="#cfcfcf" stroke-width="1" fill="none" /></svg>
<svg style="left:1285.7px;top:210.1px" width="6.400" height="3.400" viewBox="0 0 6.400 3.400"><path d="M0 0h6.400l-3.200 3.400z" fill="#fff"/></svg>
<svg style="left:1265.5px;top:225.3px" width="16" height="16" viewBox="0 0 16 16"><path d="M5.500 4l3.500-3h4l3 3.500v3.500l-5.500 6l-5-5.500z" stroke="#cfcfcf" stroke-width="1.4" fill="none" /><path d="M1.800 8l3.500-3.500v3l5 5.500l-2.500 2.500l-6-6z" stroke="#cfcfcf" stroke-width="1.4" fill="#2d3035" /><rect x="11" y="3.500" width="2" height="2" fill="#fff"/><rect x="3.500" y="8" width="1.800" height="1.800" fill="#fff"/><path d="M9 8l1 1l1-1M5.500 12l1 1l1-1" stroke="#cfcfcf" stroke-width="1" fill="none" /></svg>
<svg style="left:1285.7px;top:232.1px" width="6.400" height="3.400" viewBox="0 0 6.400 3.400"><path d="M0 0h6.400l-3.200 3.400z" fill="#fff"/></svg>
<span style="left:1190.64px;top:247.1px;height:16px;line-height:16px;font-size:11.5px;color:#f2f2f2;font-weight:bold;transform:scaleX(0.9505);transform-origin:0 0;">Blocks</span>
<svg style="left:1325px;top:185px" width="28" height="26" viewBox="0 0 28 26"><path d="M11.400 6.400L21.200 16.300" stroke="#cfcfcf" stroke-width="1.3" fill="none" /><path d="M11.400 6.400C12.500 4.500 15.500 4 18.300 7.500L24.600 2a1.600 1.600 0 0 1 2.300 2.200L21 9.600C22.500 11 24 14 21.200 16.300" stroke="#cfcfcf" stroke-width="1.3" fill="none" /><path d="M11.400 6.400L.9 12.500L12.200 24.200L21.200 16.300" stroke="#f2a630" stroke-width="1.3" fill="none" /><path d="M2.800 14L20 17.400L12.200 24.200z" fill="#f2a630" stroke="none"/></svg>
<span style="left:1324.44px;top:214.1px;height:16px;line-height:16px;font-size:11.5px;color:#f2f2f2;transform:scaleX(1.0483);transform-origin:0 0;">Match</span>
<div style="left:1363px;top:178px;width:140px;height:63px;background:#3f4247;"></div>
<div style="left:1369px;top:181px;width:15px;height:15px;background:#fff;border:1px solid #000;box-sizing:border-box;border-radius:1px;"></div>
<span style="left:1389.06px;top:180.3px;height:18px;line-height:18px;font-size:12.5px;color:#f2f2f2;transform:scaleX(0.9441);transform-origin:0 0;">ByLayer</span>
<svg style="left:1489.5px;top:189px" width="8" height="5" viewBox="0 0 8 5"><path d="M.6 .6l3.400 3.400l3.400-3.400" stroke="#f0f0f0" stroke-width="1.050" fill="none"/></svg>
<div style="left:1369px;top:209px;width:61px;height:1px;background:#f0f0f0;"></div>
<span style="left:1434.06px;top:200.7px;height:18px;line-height:18px;font-size:12.5px;color:#f2f2f2;transform:scaleX(0.9397);transform-origin:0 0;">ByLayer</span>
<svg style="left:1489.5px;top:210px" width="8" height="5" viewBox="0 0 8 5"><path d="M.6 .6l3.400 3.400l3.400-3.400" stroke="#f0f0f0" stroke-width="1.050" fill="none"/></svg>
<div style="left:1370px;top:231px;width:61px;height:1px;background:#f0f0f0;"></div>
<span style="left:1435.37px;top:222.5px;height:18px;line-height:18px;font-size:12.5px;color:#f2f2f2;transform:scaleX(0.9329);transform-origin:0 0;">ByLayer</span>
<svg style="left:1489.5px;top:231px" width="8" height="5" viewBox="0 0 8 5"><path d="M.6 .6l3.400 3.400l3.400-3.400" stroke="#f0f0f0" stroke-width="1.050" fill="none"/></svg>
<span style="left:1382.51px;top:247.1px;height:16px;line-height:16px;font-size:11.5px;color:#f2f2f2;font-weight:bold;transform:scaleX(1.0038);transform-origin:0 0;">Properties</span>
<svg style="left:1533.5px;top:180px" width="33" height="33" viewBox="0 0 33 33"><path d="M8.600 4.200h13.500v13.300h-13.500z" stroke="#cfcfcf" stroke-width="1.25" fill="none" /><circle cx="8.300" cy="19.900" r="7.900" stroke="#cfcfcf" stroke-width="1.250" fill="none"/><path d="M23.400 .6C27 2 28.300 5 28.300 8V12.500C28.300 14.500 30 15.600 32.200 16C30 16.400 28.300 17.500 28.300 19.500V24C28.300 27 27 30 23.400 31.500" stroke="#cfcfcf" stroke-width="1.25" fill="none" /></svg>
<span style="left:1528.40px;top:214.1px;height:16px;line-height:16px;font-size:11.5px;color:#f2f2f2;transform:scaleX(1.0381);transform-origin:0 0;">Group...</span>
<svg style="left:1587.5px;top:180px" width="33" height="33" viewBox="0 0 33 33"><path d="M8.600 4.200h13.500v13.300h-13.500z" stroke="#cfcfcf" stroke-width="1.25" fill="none" /><circle cx="8.300" cy="19.900" r="7.900" stroke="#cfcfcf" stroke-width="1.250" fill="none"/><path d="M23.400 .6C27 2 28.300 5 28.300 8V12.500C28.300 14.500 30 15.600 32.200 16C30 16.400 28.500 17.500 27.500 20" stroke="#cfcfcf" stroke-width="1.25" fill="none" /><path d="M21.800 21.500l10 9.800M31.800 21.500l-10 9.800" stroke="#ff0a0a" stroke-width="2.9" fill="none" /></svg>
<span style="left:1576.66px;top:214.1px;height:16px;line-height:16px;font-size:11.5px;color:#f2f2f2;transform:scaleX(1.0465);transform-origin:0 0;">Ungroup...</span>
<span style="left:1560.86px;top:247.1px;height:16px;line-height:16px;font-size:11.5px;color:#f2f2f2;font-weight:bold;transform:scaleX(0.9671);transform-origin:0 0;">Groups</span>
<svg style="left:1666.5px;top:180px" width="33" height="33" viewBox="0 0 33 33"><path d="M.8 4v11.500M32 4v11.500M2 9.500h29M5.800 6l-4 3.500l4 3.500M27.200 6l4 3.500l-4 3.500" stroke="#cfcfcf" stroke-width="1.05" fill="none" /><path d="M1 23.500h31.500v8.500h-31.500z" stroke="#f2a630" stroke-width="1.2" fill="none" /><path d="M4 23.500v4M7 23.500v3M10 23.500v4M13 23.500v3M16 23.500v4M19 23.500v3M22 23.500v4M25 23.500v3M28 23.500v4" stroke="#f2a630" stroke-width="0.9" fill="none" /></svg>
<span style="left:1660.78px;top:214.1px;height:16px;line-height:16px;font-size:11.5px;color:#f2f2f2;transform:scaleX(0.9974);transform-origin:0 0;">Distance</span>
<svg style="left:1680.7px;top:235.3px" width="6.400" height="3.400" viewBox="0 0 6.400 3.400"><path d="M0 0h6.400l-3.200 3.400z" fill="#fff"/></svg>
<div style="left:1708px;top:178px;width:24px;height:22px;background:#3f4247;border:1px solid #3d8ef5;box-sizing:border-box;"></div>
<svg style="left:1712.3px;top:181.3px" width="16" height="16" viewBox="0 0 16 16"><path d="M3.500 1h4v4h-4z" stroke="#cfcfcf" stroke-width="1" fill="none" /><path d="M6 3l1.500 6l1.500-1.800l2 2.300l1-1l-2-2.300l2-.7z" fill="#fff" stroke="#333" stroke-width=".5"/><path d="M1.500 10.500h13v4h-13z" stroke="#f2a630" stroke-width="1.3" fill="none" /><path d="M3.500 10.500v2M5.500 10.500v1.500M7.500 10.500v2M9.500 10.500v1.500M11.500 10.500v2M13 10.500v1.500" stroke="#f2a630" stroke-width="0.8" fill="none" /></svg>
<svg style="left:1712px;top:203px" width="16" height="16" viewBox="0 0 16 16"><path d="M.8 .8h14.400v14.400h-14.400z" stroke="#cfcfcf" stroke-width="1" fill="none" stroke-dasharray="1.200 1.200"/><path d="M4.500 4l2 8l2-2.500l2.500 3.500l1.500-1l-2.500-3.500l3-1z" fill="#3d4046" stroke="#ddd" stroke-width="1"/></svg>
<svg style="left:1710px;top:225px" width="16" height="16" viewBox="0 0 16 16"><path d="M4.500 9v-8" stroke="#3d8ef5" stroke-width="1.4" fill="none" /><path d="M4.500 -.5l2.300 3h-4.600z" fill="#3d8ef5" stroke="none"/><path d="M4.500 9l3.500-3.500" stroke="#3cb034" stroke-width="1.4" fill="none" /><path d="M9.500 4l-1 3l-2-2z" fill="#3cb034" stroke="none"/><path d="M5 10l5.500 3.500" stroke="#e23b3b" stroke-width="1.4" fill="none" /><path d="M8.500 15l3-1.200l-1.200-3" stroke="#e23b3b" stroke-width="1.3" fill="none" /><rect x="3" y="8" width="3" height="3" fill="#ddd"/><circle cx="11.500" cy="2.500" r="2" stroke="#cfcfcf" stroke-width="1" fill="none"/><path d="M13 4l2 2" stroke="#cfcfcf" stroke-width="1.2" fill="none" /></svg>
<svg style="left:1731.8px;top:231.8px" width="6.400" height="3.400" viewBox="0 0 6.400 3.400"><path d="M0 0h6.400l-3.200 3.400z" fill="#fff"/></svg>
<span style="left:1679.91px;top:247.1px;height:16px;line-height:16px;font-size:11.5px;color:#f2f2f2;font-weight:bold;transform:scaleX(0.9940);transform-origin:0 0;">Utilities</span>
<svg style="left:1775px;top:180px" width="27" height="32" viewBox="0 0 27 32"><path d="M0 0h11l4.500 4.500v17.500h-15.500z" fill="#2f6fd0" stroke="none"/><path d="M11 0v4.500h4.500z" fill="#8db8f2" stroke="none"/><text x="6.500" y="16" font-size="11" font-weight="bold" text-anchor="middle" fill="#dfe8f8" font-family="Liberation Sans">A</text><path d="M11 10h11l4.500 4.500v17.500h-15.500z" fill="#3d8ef5" stroke="none"/><path d="M22 10v4.500h4.500z" fill="#a8cbf8" stroke="none"/><text x="18.500" y="27.500" font-size="11" font-weight="bold" text-anchor="middle" fill="#fff" font-family="Liberation Sans">B</text></svg>
<span style="left:1779.33px;top:213.9px;height:16px;line-height:16px;font-size:11.5px;color:#f2f2f2;transform:scaleX(1.0582);transform-origin:0 0;">Dwg</span>
<span style="left:1767.93px;top:228.9px;height:16px;line-height:16px;font-size:11.5px;color:#f2f2f2;transform:scaleX(0.9974);transform-origin:0 0;">Compare</span>
<span style="left:1765.73px;top:247.1px;height:16px;line-height:16px;font-size:11.5px;color:#f2f2f2;font-weight:bold;transform:scaleX(1.0306);transform-origin:0 0;">Compare</span>
</body></html>
